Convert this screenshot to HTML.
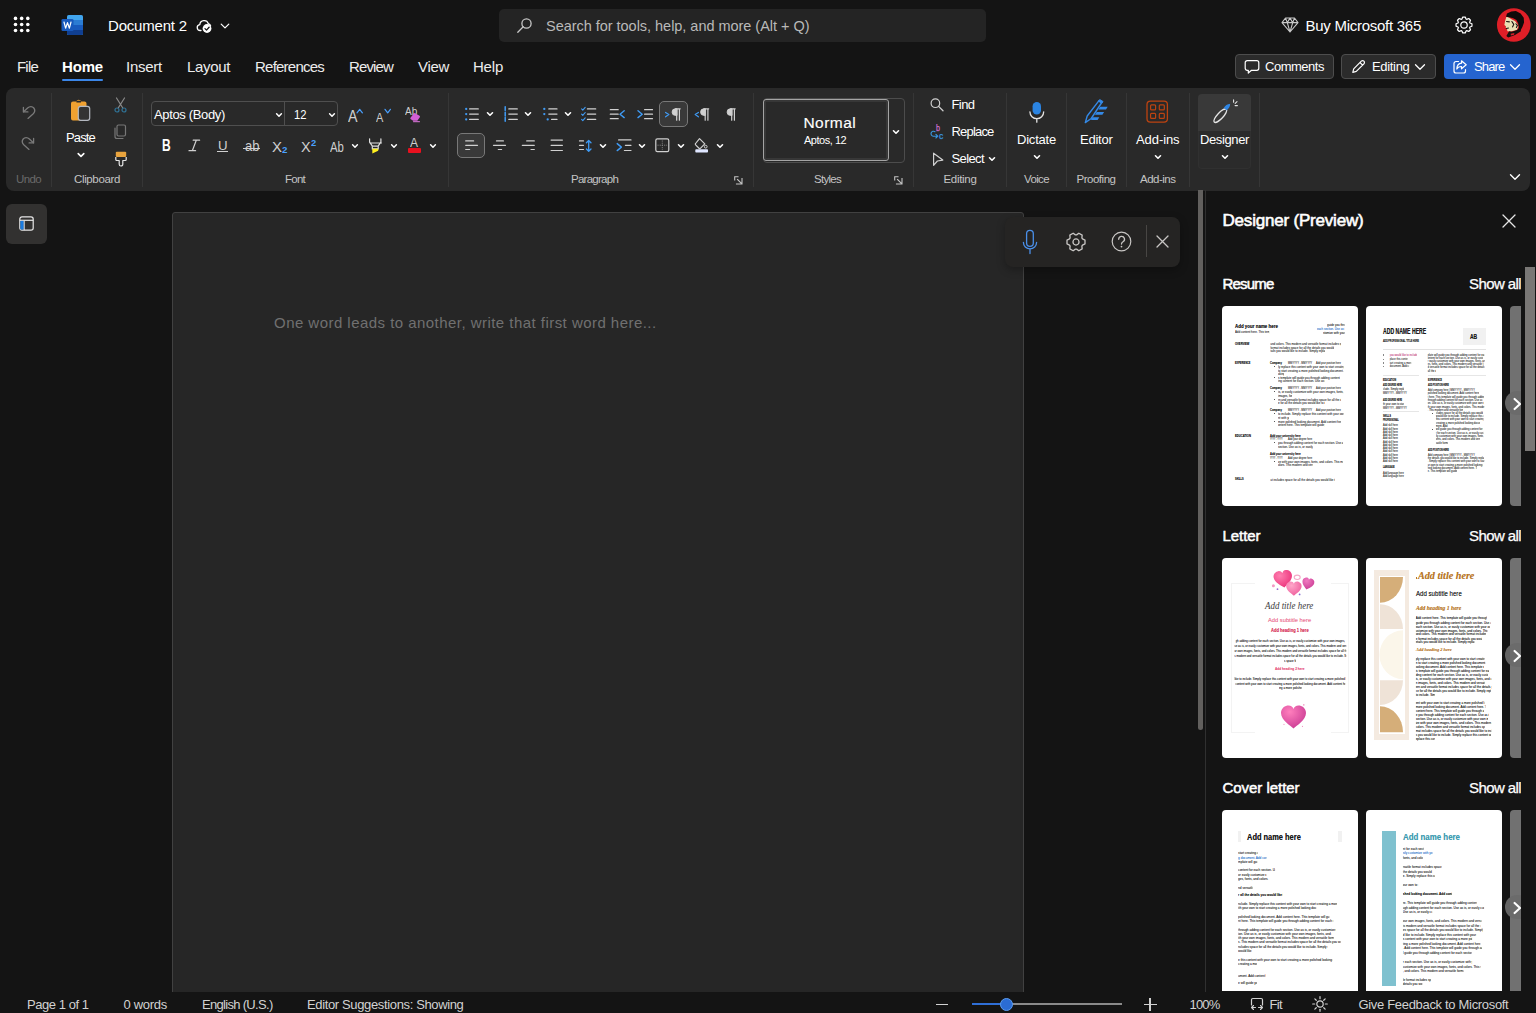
<!DOCTYPE html>
<html><head><meta charset="utf-8"><title>Document 2.docx</title>
<style>
html,body{margin:0;padding:0;background:#141414;}
body{width:1536px;height:1013px;overflow:hidden;position:relative;font-family:"Liberation Sans",sans-serif;}
.t{position:absolute;white-space:nowrap;line-height:1;}
.b{position:absolute;box-sizing:border-box;}
svg{overflow:visible}
</style></head><body>
<svg class="b" style="left:13px;top:16px;" width="18" height="18" viewBox="0 0 18 18" fill="none"><circle cx="2.50" cy="2.40" r="1.800" fill="#fff"/><circle cx="2.50" cy="8.45" r="1.800" fill="#fff"/><circle cx="2.50" cy="14.50" r="1.800" fill="#fff"/><circle cx="8.65" cy="2.40" r="1.800" fill="#fff"/><circle cx="8.65" cy="8.45" r="1.800" fill="#fff"/><circle cx="8.65" cy="14.50" r="1.800" fill="#fff"/><circle cx="14.80" cy="2.40" r="1.800" fill="#fff"/><circle cx="14.80" cy="8.45" r="1.800" fill="#fff"/><circle cx="14.80" cy="14.50" r="1.800" fill="#fff"/></svg>
<svg class="b" style="left:61px;top:14px;" width="23" height="22" viewBox="0 0 23 22" fill="none">
<rect x="6" y="1" width="16" height="20" rx="1.6" fill="#41a5ee"/>
<rect x="6" y="6" width="16" height="5" fill="#2b7cd3"/>
<rect x="6" y="11" width="16" height="5" fill="#185abd"/>
<path d="M6 16h16v3.4a1.6 1.6 0 0 1-1.6 1.6H7.6A1.6 1.6 0 0 1 6 19.4z" fill="#103f91"/>
<rect x="0.5" y="5" width="12" height="12" rx="1.3" fill="#185abd"/>
<path d="M3 8l1.6 6.2L6.5 8.6 8.4 14.2 10 8" stroke="#fff" stroke-width="1.2" stroke-linejoin="round" stroke-linecap="round"/>
</svg>
<div class="t" style="left:108.0px;top:18.3px;font-size:15px;color:#ffffff;font-weight:normal;font-style:normal;letter-spacing:-0.19px;font-family:'Liberation Sans',sans-serif;">Document 2</div>
<svg class="b" style="left:196px;top:18px;" width="17" height="16" viewBox="0 0 17 16" fill="none">
<path d="M5 12.5H4.2a3 3 0 0 1-.4-5.97A4.4 4.4 0 0 1 12.3 5.6 3.2 3.2 0 0 1 14.6 8" stroke="#fff" stroke-width="1.3" stroke-linecap="round"/>
<circle cx="11" cy="10.5" r="4.4" fill="#fff"/>
<path d="M9 10.6l1.5 1.5 2.6-2.9" stroke="#141414" stroke-width="1.3" stroke-linecap="round" stroke-linejoin="round"/>
</svg>
<svg class="b" style="left:218.7px;top:19.7px;" width="12" height="12" viewBox="0 0 12 12" fill="none"><path d="M2.2 4.1 L6 7.9 L9.8 4.1" stroke="#ffffff" stroke-width="1.25" stroke-linecap="round" stroke-linejoin="round"/></svg>
<div class="b" style="left:499px;top:8.5px;width:487px;height:33px;background:#242424;border-radius:5px;"></div>
<svg class="b" style="left:516px;top:17px;" width="17" height="17" viewBox="0 0 17 17" fill="none"><circle cx="10.5" cy="6.5" r="4.6" stroke="#c8c8c8" stroke-width="1.3"/><path d="M7.2 9.8L1.8 15.2" stroke="#c8c8c8" stroke-width="1.3" stroke-linecap="round"/></svg>
<div class="t" style="left:546.0px;top:18.7px;font-size:14.5px;color:#b9b9b9;font-weight:normal;font-style:normal;letter-spacing:-0.03px;font-family:'Liberation Sans',sans-serif;">Search for tools, help, and more (Alt + Q)</div>
<svg class="b" style="left:1281px;top:17px;" width="18" height="16" viewBox="0 0 18 16" fill="none"><path d="M4.5 1h9L17 5.6 9 15 1 5.6z M1 5.6h16 M6.3 5.6L9 15l2.7-9.4 M4.5 1l1.8 4.6L9 1l2.7 4.6L13.5 1" stroke="#c8c8c8" stroke-width="1.1" stroke-linejoin="round"/></svg>
<div class="t" style="left:1305.5px;top:18.3px;font-size:15px;color:#ffffff;font-weight:normal;font-style:normal;letter-spacing:-0.27px;font-family:'Liberation Sans',sans-serif;">Buy Microsoft 365</div>
<svg class="b" style="left:1453.8px;top:14.8px;" width="20" height="20" viewBox="0 0 20 20" fill="none"><path d="M15.94 7.97 L17.95 8.74 L17.95 11.26 L15.94 12.03 L15.64 12.76 L16.51 14.73 L14.73 16.51 L12.76 15.64 L12.03 15.94 L11.26 17.95 L8.74 17.95 L7.97 15.94 L7.24 15.64 L5.27 16.51 L3.49 14.73 L4.36 12.76 L4.06 12.03 L2.05 11.26 L2.05 8.74 L4.06 7.97 L4.36 7.24 L3.49 5.27 L5.27 3.49 L7.24 4.36 L7.97 4.06 L8.74 2.05 L11.26 2.05 L12.03 4.06 L12.76 4.36 L14.73 3.49 L16.51 5.27 L15.64 7.24Z" stroke="#fff" stroke-width="1.2" stroke-linejoin="round"/><circle cx="10" cy="10" r="3.22" stroke="#fff" stroke-width="1.2"/></svg>
<svg class="b" style="left:1496px;top:7px;" width="36" height="36" viewBox="0 0 36 36" fill="none">
<circle cx="17.750" cy="18" r="16.800" fill="#df1f27"/>
<path d="M10.38 9.75 9.12 13.94 8.38 17.88 9.94 19.25 9.75 20.81 11.19 22.38 11.38 24.25 14.62 24.56 20.75 22.88 22.25 19.56 21.19 16.75 19.00 13.94 15.88 12.38 12.75 10.62 z" fill="#e9e0b4"/>
<path d="M10.00 9.75 11.00 6.44 15.25 4.56 19.94 4.12 24.62 6.44 27.75 10.81 28.06 15.50 26.38 19.88 24.62 23.31 22.00 24.12 22.88 19.88 22.12 16.25 20.38 13.12 17.12 11.25 13.06 10.25 z" fill="#0e0b0a"/>
<path d="M13.06 24.25 10.38 28.94 12.25 30.62 19.00 28.00 24.94 24.25 24.31 20.50 21.00 23.12 15.88 24.75 z" fill="#15100e"/>
<path d="M10.56 14.56 13.38 14.88M 15.88 14.56 17.75 17.38 16.50 19.88M 10.25 21.44 12.44 21.00M 19.94 16.75 21.38 18.62 20.38 20.50" stroke="#1a1412" stroke-width="1.1" fill="none" stroke-linecap="round"/>
<path d="M14.62 26.75 18.38 26.00 18.06 27.69 14.94 28.62 z" fill="#d8202a"/>
</svg>
<div class="t" style="left:17.0px;top:58.9px;font-size:15px;color:#ececec;font-weight:normal;font-style:normal;letter-spacing:-0.79px;font-family:'Liberation Sans',sans-serif;">File</div>
<div class="t" style="left:62.0px;top:58.9px;font-size:15px;color:#ffffff;font-weight:bold;font-style:normal;letter-spacing:-0.17px;font-family:'Liberation Sans',sans-serif;">Home</div>
<div class="t" style="left:126.0px;top:58.9px;font-size:15px;color:#ececec;font-weight:normal;font-style:normal;letter-spacing:-0.25px;font-family:'Liberation Sans',sans-serif;">Insert</div>
<div class="t" style="left:187.0px;top:58.9px;font-size:15px;color:#ececec;font-weight:normal;font-style:normal;letter-spacing:-0.34px;font-family:'Liberation Sans',sans-serif;">Layout</div>
<div class="t" style="left:255.0px;top:58.9px;font-size:15px;color:#ececec;font-weight:normal;font-style:normal;letter-spacing:-0.77px;font-family:'Liberation Sans',sans-serif;">References</div>
<div class="t" style="left:349.0px;top:58.9px;font-size:15px;color:#ececec;font-weight:normal;font-style:normal;letter-spacing:-0.86px;font-family:'Liberation Sans',sans-serif;">Review</div>
<div class="t" style="left:418.0px;top:58.9px;font-size:15px;color:#ececec;font-weight:normal;font-style:normal;letter-spacing:-0.31px;font-family:'Liberation Sans',sans-serif;">View</div>
<div class="t" style="left:473.0px;top:58.9px;font-size:15px;color:#ececec;font-weight:normal;font-style:normal;letter-spacing:-0.21px;font-family:'Liberation Sans',sans-serif;">Help</div>
<div class="b" style="left:62px;top:78.5px;width:41px;height:2.5px;background:#3b86e8;border-radius:1.2px;"></div>
<div class="b" style="left:1235px;top:54px;width:99px;height:25px;background:#2b2b2b;border-radius:4px;border:1px solid #4d4d4d;"></div>
<svg class="b" style="left:1244px;top:59px;" width="16" height="16" viewBox="0 0 16 16" fill="none"><path d="M3.2 1.700h9.600a2 2 0 0 1 2 2v5.600a2 2 0 0 1-2 2H7.500L4.300 14v-2.700H3.200a2 2 0 0 1-2-2V3.700a2 2 0 0 1 2-2z" stroke="#fff" stroke-width="1.2" stroke-linejoin="round"/></svg>
<div class="t" style="left:1265.0px;top:59.8px;font-size:13px;color:#ffffff;font-weight:normal;font-style:normal;letter-spacing:-0.48px;font-family:'Liberation Sans',sans-serif;">Comments</div>
<div class="b" style="left:1341px;top:54px;width:95px;height:25px;background:#2b2b2b;border-radius:4px;border:1px solid #4d4d4d;"></div>
<svg class="b" style="left:1351px;top:59px;" width="15" height="15" viewBox="0 0 15 15" fill="none"><path d="M10.300 2.200a1.800 1.800 0 0 1 2.600 2.600L5.300 12.400 1.800 13.300l.9-3.500z M9 3.500l2.600 2.600" stroke="#fff" stroke-width="1.2" stroke-linejoin="round"/></svg>
<div class="t" style="left:1372.0px;top:59.8px;font-size:13px;color:#ffffff;font-weight:normal;font-style:normal;letter-spacing:-0.32px;font-family:'Liberation Sans',sans-serif;">Editing</div>
<svg class="b" style="left:1413.5px;top:61px;" width="12" height="12" viewBox="0 0 12 12" fill="none"><path d="M1.5 3.75 L6 8.25 L10.5 3.75" stroke="#ffffff" stroke-width="1.3" stroke-linecap="round" stroke-linejoin="round"/></svg>
<div class="b" style="left:1444px;top:54px;width:86.5px;height:25px;background:#2564cf;border-radius:4px;"></div>
<svg class="b" style="left:1452px;top:59px;" width="16" height="16" viewBox="0 0 16 16" fill="none"><path d="M6.500 2.500H4a2 2 0 0 0-2 2V12a2 2 0 0 0 2 2h7.500a2 2 0 0 0 2-2v-1.500" stroke="#fff" stroke-width="1.2" stroke-linecap="round"/><path d="M9.500 1.800l4.700 4-4.700 4V7.500C7 7.500 5.600 8.400 4.800 10 5 6.500 6.800 4.500 9.500 4.200z" stroke="#fff" stroke-width="1.2" stroke-linejoin="round"/></svg>
<div class="t" style="left:1474.0px;top:59.8px;font-size:13px;color:#ffffff;font-weight:normal;font-style:normal;letter-spacing:-0.84px;font-family:'Liberation Sans',sans-serif;">Share</div>
<svg class="b" style="left:1509px;top:61px;" width="12" height="12" viewBox="0 0 12 12" fill="none"><path d="M1.5 3.75 L6 8.25 L10.5 3.75" stroke="#ffffff" stroke-width="1.3" stroke-linecap="round" stroke-linejoin="round"/></svg>
<div class="b" style="left:6px;top:88px;width:1524px;height:102.7px;background:#292929;border-radius:8px;"></div>
<div class="b" style="left:51px;top:93px;width:1px;height:94px;background:#363636;border-radius:0px;"></div>
<div class="b" style="left:142px;top:93px;width:1px;height:94px;background:#363636;border-radius:0px;"></div>
<div class="b" style="left:448px;top:93px;width:1px;height:94px;background:#363636;border-radius:0px;"></div>
<div class="b" style="left:753px;top:93px;width:1px;height:94px;background:#363636;border-radius:0px;"></div>
<div class="b" style="left:913px;top:93px;width:1px;height:94px;background:#363636;border-radius:0px;"></div>
<div class="b" style="left:1006px;top:93px;width:1px;height:94px;background:#363636;border-radius:0px;"></div>
<div class="b" style="left:1066px;top:93px;width:1px;height:94px;background:#363636;border-radius:0px;"></div>
<div class="b" style="left:1126px;top:93px;width:1px;height:94px;background:#363636;border-radius:0px;"></div>
<div class="b" style="left:1189px;top:93px;width:1px;height:94px;background:#363636;border-radius:0px;"></div>
<div class="b" style="left:1259px;top:93px;width:1px;height:94px;background:#363636;border-radius:0px;"></div>
<div class="t" style="left:16.0px;top:173.7px;font-size:11.5px;color:#6a6a6a;font-weight:normal;font-style:normal;letter-spacing:-0.62px;font-family:'Liberation Sans',sans-serif;">Undo</div>
<div class="t" style="left:74.0px;top:173.7px;font-size:11.5px;color:#c4c4c4;font-weight:normal;font-style:normal;letter-spacing:-0.36px;font-family:'Liberation Sans',sans-serif;">Clipboard</div>
<div class="t" style="left:285.0px;top:173.7px;font-size:11.5px;color:#c4c4c4;font-weight:normal;font-style:normal;letter-spacing:-0.75px;font-family:'Liberation Sans',sans-serif;">Font</div>
<div class="t" style="left:571.0px;top:173.7px;font-size:11.5px;color:#c4c4c4;font-weight:normal;font-style:normal;letter-spacing:-0.74px;font-family:'Liberation Sans',sans-serif;">Paragraph</div>
<div class="t" style="left:814.0px;top:173.7px;font-size:11.5px;color:#c4c4c4;font-weight:normal;font-style:normal;letter-spacing:-0.72px;font-family:'Liberation Sans',sans-serif;">Styles</div>
<div class="t" style="left:943.5px;top:173.7px;font-size:11.5px;color:#c4c4c4;font-weight:normal;font-style:normal;letter-spacing:-0.31px;font-family:'Liberation Sans',sans-serif;">Editing</div>
<div class="t" style="left:1024.0px;top:173.7px;font-size:11.5px;color:#c4c4c4;font-weight:normal;font-style:normal;letter-spacing:-0.63px;font-family:'Liberation Sans',sans-serif;">Voice</div>
<div class="t" style="left:1076.5px;top:173.7px;font-size:11.5px;color:#c4c4c4;font-weight:normal;font-style:normal;letter-spacing:-0.48px;font-family:'Liberation Sans',sans-serif;">Proofing</div>
<div class="t" style="left:1140.0px;top:173.7px;font-size:11.5px;color:#c4c4c4;font-weight:normal;font-style:normal;letter-spacing:-0.50px;font-family:'Liberation Sans',sans-serif;">Add-ins</div>
<svg class="b" style="left:22px;top:105px;" width="13" height="14" viewBox="0 0 13 14" fill="none"><path d="M1.400 2.400V6.900H5.900" stroke="#7a7a7a" stroke-width="1.300" stroke-linecap="round" stroke-linejoin="round"/><path d="M1.600 6.700L5.600 3C7.500 1.200 10.300 1.100 11.800 3c1.500 2 1 4.300-.8 6L6 13.400" stroke="#7a7a7a" stroke-width="1.300" stroke-linecap="round" stroke-linejoin="round"/></svg>
<svg class="b" style="left:22px;top:136px;" width="13" height="14" viewBox="0 0 13 14" fill="none"><path d="M11.600 2.400V6.900H7.100" stroke="#7a7a7a" stroke-width="1.300" stroke-linecap="round" stroke-linejoin="round"/><path d="M11.400 6.700L7.400 3C5.500 1.200 2.700 1.100 1.200 3c-1.500 2-1 4.300.8 6L7 13.400" stroke="#7a7a7a" stroke-width="1.300" stroke-linecap="round" stroke-linejoin="round"/></svg>
<svg class="b" style="left:70px;top:99px;" width="22" height="23" viewBox="0 0 22 23" fill="none">
<path d="M3 2.600h3.200a2.600 2.600 0 0 1 5 0h3.300a2 2 0 0 1 2 2V19.500a2 2 0 0 1-2 2H3a2 2 0 0 1-2-2V4.600a2 2 0 0 1 2-2z" fill="#f0a130"/>
<rect x="6.300" y="1.800" width="4.800" height="1.800" rx=".9" fill="#292929"/>
<rect x="8.300" y="7.300" width="11.400" height="14" rx="2.300" fill="#333333" stroke="#b4b8c0" stroke-width="1.200"/>
</svg>
<div class="t" style="left:66.0px;top:131.3px;font-size:13px;color:#ffffff;font-weight:normal;font-style:normal;letter-spacing:-0.85px;font-family:'Liberation Sans',sans-serif;">Paste</div>
<svg class="b" style="left:74.5px;top:149px;" width="12" height="12" viewBox="0 0 12 12" fill="none"><path d="M3.2 4.6 L6 7.4 L8.8 4.6" stroke="#ffffff" stroke-width="1.6" stroke-linecap="round" stroke-linejoin="round"/></svg>
<svg class="b" style="left:114px;top:97px;" width="13" height="16" viewBox="0 0 13 16" fill="none"><path d="M2.500 1l6.300 10 M10.500 1L4.200 11" stroke="#8a8a8a" stroke-width="1.200" stroke-linecap="round"/><circle cx="3" cy="13" r="2" stroke="#2f7296" stroke-width="1.200"/><circle cx="10" cy="13" r="2" stroke="#2f7296" stroke-width="1.200"/></svg>
<svg class="b" style="left:114px;top:124px;" width="12" height="16" viewBox="0 0 12 16" fill="none"><rect x="3" y="1" width="8.500" height="11" rx="1.500" stroke="#777" stroke-width="1.200"/><path d="M1 4v8.500a2 2 0 0 0 2 2h6" stroke="#777" stroke-width="1.200" stroke-linecap="round"/></svg>
<svg class="b" style="left:115px;top:151px;" width="12" height="16" viewBox="0 0 12 16" fill="none"><rect x=".8" y=".8" width="10.400" height="5.200" rx="1" fill="#e8a33d"/><path d="M.8 6v2.500a1 1 0 0 0 1 1h2.400v3.700a1.800 1.800 0 0 0 3.600 0V9.500h2.400a1 1 0 0 0 1-1V6" stroke="#e6e6e6" stroke-width="1.200" stroke-linejoin="round"/></svg>
<div class="b" style="left:151px;top:101px;width:187px;height:25px;background:#292929;border-radius:4px;border:1px solid #4f4f4f;"></div>
<div class="b" style="left:284px;top:102px;width:1px;height:23px;background:#4f4f4f;border-radius:0px;"></div>
<div class="t" style="left:154.0px;top:108.3px;font-size:13px;color:#ffffff;font-weight:normal;font-style:normal;letter-spacing:-0.35px;font-family:'Liberation Sans',sans-serif;">Aptos (Body)</div>
<svg class="b" style="left:272.5px;top:108.5px;" width="12" height="12" viewBox="0 0 12 12" fill="none"><path d="M3.6 4.8 L6 7.2 L8.4 4.8" stroke="#ffffff" stroke-width="1.5" stroke-linecap="round" stroke-linejoin="round"/></svg>
<div class="t" style="left:293.5px;top:108.3px;font-size:13px;color:#ffffff;font-weight:normal;font-style:normal;letter-spacing:0.00px;font-family:'Liberation Sans',sans-serif;transform:scaleX(0.864);transform-origin:0 0;">12</div>
<svg class="b" style="left:325.5px;top:108.5px;" width="12" height="12" viewBox="0 0 12 12" fill="none"><path d="M3.6 4.8 L6 7.2 L8.4 4.8" stroke="#ffffff" stroke-width="1.5" stroke-linecap="round" stroke-linejoin="round"/></svg>
<div class="t" style="left:347.5px;top:107.5px;font-size:16.5px;color:#d0d0d0;font-weight:normal;font-style:normal;letter-spacing:0.00px;font-family:'Liberation Sans',sans-serif;transform:scaleX(0.863);transform-origin:0 0;">A</div>
<svg class="b" style="left:355.5px;top:107.5px;" width="8" height="6" viewBox="0 0 8 6" fill="none"><path d="M1 4.800L3.700 1.300l2.700 3.500" stroke="#4aa0ff" stroke-width="1.200" stroke-linecap="round" stroke-linejoin="round"/></svg>
<div class="t" style="left:376.0px;top:110.5px;font-size:13px;color:#d0d0d0;font-weight:normal;font-style:normal;letter-spacing:0.00px;font-family:'Liberation Sans',sans-serif;transform:scaleX(0.842);transform-origin:0 0;">A</div>
<svg class="b" style="left:383.8px;top:107.5px;" width="8" height="6" viewBox="0 0 8 6" fill="none"><path d="M1 1.300L3.700 4.800l2.700-3.500" stroke="#4aa0ff" stroke-width="1.200" stroke-linecap="round" stroke-linejoin="round"/></svg>
<div class="t" style="left:404.7px;top:106.1px;font-size:11.5px;color:#d0d0d0;font-weight:normal;font-style:normal;letter-spacing:0.00px;font-family:'Liberation Sans',sans-serif;transform:scaleX(0.874);transform-origin:0 0;">Ab</div>
<svg class="b" style="left:409px;top:112px;" width="12" height="11" viewBox="0 0 12 11" fill="none"><path d="M6.200 1.200l4.300 2.600a1 1 0 0 1 .3 1.400L8.300 8.700H4.200L1.800 7.200a1 1 0 0 1-.3-1.400l3.300-4.300a1 1 0 0 1 1.400-.300z" fill="#d45fd4"/><path d="M4.500 9.700h6" stroke="#e07ae0" stroke-width="1" stroke-linecap="round"/></svg>
<div class="t" style="left:161.5px;top:137.7px;font-size:16px;color:#ffffff;font-weight:bold;font-style:normal;letter-spacing:0.00px;font-family:'Liberation Sans',sans-serif;transform:scaleX(0.753);transform-origin:0 0;">B</div>
<svg class="b" style="left:188px;top:139px;" width="13" height="13" viewBox="0 0 13 13" fill="none"><path d="M5.200 1.200h6.400 M1 11.700h6.600 M8.300 1.200L4.300 11.700" stroke="#d0d0d0" stroke-width="1.200" stroke-linecap="round"/></svg>
<div class="t" style="left:217.7px;top:138.5px;font-size:13.2px;color:#d0d0d0;font-weight:normal;font-style:normal;letter-spacing:0.00px;font-family:'Liberation Sans',sans-serif;transform:scaleX(1.007);transform-origin:0 0;">U</div>
<div class="b" style="left:217px;top:150.7px;width:11px;height:1.2px;background:#d0d0d0;border-radius:0px;"></div>
<div class="t" style="left:244.5px;top:138.1px;font-size:15.5px;color:#d0d0d0;font-weight:normal;font-style:normal;letter-spacing:0.00px;font-family:'Liberation Sans',sans-serif;transform:scaleX(0.841);transform-origin:0 0;">ab</div>
<div class="b" style="left:243.3px;top:147.6px;width:16.5px;height:1.2px;background:#d0d0d0;border-radius:0px;"></div>
<div class="t" style="left:272.0px;top:138.5px;font-size:15px;color:#d0d0d0;font-weight:normal;font-style:normal;letter-spacing:0.00px;font-family:'Liberation Sans',sans-serif;transform:scaleX(1.000);transform-origin:0 0;">X</div>
<div class="t" style="left:282.2px;top:145.3px;font-size:9.5px;color:#4aa0ff;font-weight:bold;font-style:normal;letter-spacing:0.00px;font-family:'Liberation Sans',sans-serif;transform:scaleX(1.022);transform-origin:0 0;">2</div>
<div class="t" style="left:300.8px;top:138.5px;font-size:15px;color:#d0d0d0;font-weight:normal;font-style:normal;letter-spacing:0.00px;font-family:'Liberation Sans',sans-serif;transform:scaleX(0.960);transform-origin:0 0;">X</div>
<div class="t" style="left:310.6px;top:137.6px;font-size:9.5px;color:#4aa0ff;font-weight:bold;font-style:normal;letter-spacing:0.00px;font-family:'Liberation Sans',sans-serif;transform:scaleX(0.984);transform-origin:0 0;">2</div>
<div class="t" style="left:329.7px;top:138.5px;font-size:15px;color:#d0d0d0;font-weight:normal;font-style:normal;letter-spacing:0.00px;font-family:'Liberation Sans',sans-serif;transform:scaleX(0.758);transform-origin:0 0;">Ab</div>
<svg class="b" style="left:349px;top:139.5px;" width="12" height="12" viewBox="0 0 12 12" fill="none"><path d="M3.6 4.8 L6 7.2 L8.4 4.8" stroke="#ffffff" stroke-width="1.5" stroke-linecap="round" stroke-linejoin="round"/></svg>
<svg class="b" style="left:368px;top:138px;" width="15" height="16" viewBox="0 0 15 16" fill="none"><path d="M1.600 .8v3.400l2.800 4h5.700l2.800-4V.8 M2 5h11.400" stroke="#e0e0e0" stroke-width="1.200" stroke-linejoin="round" stroke-linecap="round"/><path d="M4.300 8.300v2.500h5.900V8.300" stroke="#e0e0e0" stroke-width="1.200"/><path d="M4.300 10.800h5.900v2L4.300 15.600z" fill="#fff01f"/></svg>
<svg class="b" style="left:387.5px;top:139.5px;" width="12" height="12" viewBox="0 0 12 12" fill="none"><path d="M3.6 4.8 L6 7.2 L8.4 4.8" stroke="#ffffff" stroke-width="1.5" stroke-linecap="round" stroke-linejoin="round"/></svg>
<div class="t" style="left:410.0px;top:137.3px;font-size:12px;color:#d0d0d0;font-weight:normal;font-style:normal;letter-spacing:0.00px;font-family:'Liberation Sans',sans-serif;transform:scaleX(0.999);transform-origin:0 0;">A</div>
<div class="b" style="left:408px;top:148.3px;width:12.6px;height:4.3px;background:#e8111f;border-radius:1px;"></div>
<svg class="b" style="left:426.5px;top:139.5px;" width="12" height="12" viewBox="0 0 12 12" fill="none"><path d="M3.6 4.8 L6 7.2 L8.4 4.8" stroke="#ffffff" stroke-width="1.5" stroke-linecap="round" stroke-linejoin="round"/></svg>
<div class="b" style="left:659px;top:101px;width:29px;height:26px;background:#393939;border-radius:5px;border:1px solid #787878;"></div>
<div class="b" style="left:457px;top:132.5px;width:28px;height:25.5px;background:#393939;border-radius:5px;border:1px solid #787878;"></div>
<svg class="b" style="left:0px;top:0px;pointer-events:none;" width="1536" height="1013" viewBox="0 0 1536 1013" fill="none"><circle cx="466.2" cy="108.9" r="1.150" fill="#3f9bf5"/><path d="M469.6 108.9H478.3" stroke="#d0d0d0" stroke-width="1.2" stroke-linecap="round"/><circle cx="466.2" cy="114.1" r="1.150" fill="#3f9bf5"/><path d="M469.6 114.1H478.3" stroke="#d0d0d0" stroke-width="1.2" stroke-linecap="round"/><circle cx="466.2" cy="119.4" r="1.150" fill="#3f9bf5"/><path d="M469.6 119.4H478.3" stroke="#d0d0d0" stroke-width="1.2" stroke-linecap="round"/><path d="M508.8 108.9H517.3" stroke="#d0d0d0" stroke-width="1.2" stroke-linecap="round"/><path d="M508.8 114.1H517.3" stroke="#d0d0d0" stroke-width="1.2" stroke-linecap="round"/><path d="M508.8 119.4H517.3" stroke="#d0d0d0" stroke-width="1.2" stroke-linecap="round"/><path d="M505.200 106.800V110.400 M505.200 112.200V116 M505.200 117.600V121.300" stroke="#3f9bf5" stroke-width="1.5" stroke-linecap="round" stroke-linejoin="round" fill="none"/><circle cx="544.3" cy="108.9" r="1.150" fill="#3f9bf5"/><path d="M548.8 108.9H557" stroke="#d0d0d0" stroke-width="1.2" stroke-linecap="round"/><circle cx="544.3" cy="114.1" r="1.150" fill="#3f9bf5"/><path d="M548.8 114.1H557" stroke="#d0d0d0" stroke-width="1.2" stroke-linecap="round"/><circle cx="547.7" cy="119.4" r="1.150" fill="#3f9bf5"/><path d="M551.6 119.4H557" stroke="#d0d0d0" stroke-width="1.2" stroke-linecap="round"/><path d="M581.600 108.9l1.200 1.200 2.400-2.800" stroke="#3f9bf5" stroke-width="1.1" stroke-linecap="round" stroke-linejoin="round" fill="none"/><path d="M587.4 108.9H595.7" stroke="#d0d0d0" stroke-width="1.2" stroke-linecap="round"/><path d="M581.600 114.1l1.200 1.200 2.400-2.800" stroke="#3f9bf5" stroke-width="1.1" stroke-linecap="round" stroke-linejoin="round" fill="none"/><path d="M587.4 114.1H595.7" stroke="#d0d0d0" stroke-width="1.2" stroke-linecap="round"/><path d="M581.600 119.4l1.200 1.200 2.400-2.800" stroke="#3f9bf5" stroke-width="1.1" stroke-linecap="round" stroke-linejoin="round" fill="none"/><path d="M587.4 119.4H595.7" stroke="#d0d0d0" stroke-width="1.2" stroke-linecap="round"/><path d="M610.3 109.7H618.2" stroke="#d0d0d0" stroke-width="1.2" stroke-linecap="round"/><path d="M610.3 114.2H618.2" stroke="#d0d0d0" stroke-width="1.2" stroke-linecap="round"/><path d="M610.3 118.7H618.2" stroke="#d0d0d0" stroke-width="1.2" stroke-linecap="round"/><path d="M624.200 110.800L620 114.200l4.200 3.400" stroke="#3f9bf5" stroke-width="1.4" stroke-linecap="round" stroke-linejoin="round" fill="none"/><path d="M644.6 109.7H652.5" stroke="#d0d0d0" stroke-width="1.2" stroke-linecap="round"/><path d="M644.6 114.2H652.5" stroke="#d0d0d0" stroke-width="1.2" stroke-linecap="round"/><path d="M644.6 118.7H652.5" stroke="#d0d0d0" stroke-width="1.2" stroke-linecap="round"/><path d="M638 110.800l4.200 3.400-4.200 3.400" stroke="#3f9bf5" stroke-width="1.4" stroke-linecap="round" stroke-linejoin="round" fill="none"/><path d="M676.6999999999999 108.8H675.4a3.300 3.300 0 0 0 0 6.600H676.6999999999999z" stroke="#d0d0d0" stroke-width="0.9" stroke-linecap="round" stroke-linejoin="round" fill="#d0d0d0"/><path d="M675.4 108.8H680.1999999999999 M676.6999999999999 108.8V120.2 M679.4 108.8V120.2" stroke="#d0d0d0" stroke-width="1.2" stroke-linecap="round" stroke-linejoin="round" fill="none"/><path d="M665.600 112.400l3.200 2.200-3.200 2.200" stroke="#3f9bf5" stroke-width="1.2" stroke-linecap="round" stroke-linejoin="round" fill="none"/><path d="M705.1999999999999 108.8H703.9a3.300 3.300 0 0 0 0 6.600H705.1999999999999z" stroke="#d0d0d0" stroke-width="0.9" stroke-linecap="round" stroke-linejoin="round" fill="#d0d0d0"/><path d="M703.9 108.8H708.6999999999999 M705.1999999999999 108.8V120.2 M707.9 108.8V120.2" stroke="#d0d0d0" stroke-width="1.2" stroke-linecap="round" stroke-linejoin="round" fill="none"/><path d="M698.400 112.400l-3.200 2.200 3.200 2.200" stroke="#3f9bf5" stroke-width="1.2" stroke-linecap="round" stroke-linejoin="round" fill="none"/><path d="M731.6999999999999 108.8H730.4a3.300 3.300 0 0 0 0 6.600H731.6999999999999z" stroke="#d0d0d0" stroke-width="0.9" stroke-linecap="round" stroke-linejoin="round" fill="#d0d0d0"/><path d="M730.4 108.8H735.1999999999999 M731.6999999999999 108.8V120.2 M734.4 108.8V120.2" stroke="#d0d0d0" stroke-width="1.2" stroke-linecap="round" stroke-linejoin="round" fill="none"/><path d="M465.7 140.9H473.6" stroke="#d0d0d0" stroke-width="1.2" stroke-linecap="round"/><path d="M465.7 145.3H477.5" stroke="#d0d0d0" stroke-width="1.2" stroke-linecap="round"/><path d="M465.7 149.5H469.6" stroke="#d0d0d0" stroke-width="1.2" stroke-linecap="round"/><path d="M496.5 140.9H503.4" stroke="#d0d0d0" stroke-width="1.2" stroke-linecap="round"/><path d="M493.5 145.3H505.5" stroke="#d0d0d0" stroke-width="1.2" stroke-linecap="round"/><path d="M498.3 149.5H501.6" stroke="#d0d0d0" stroke-width="1.2" stroke-linecap="round"/><path d="M526.7 140.9H534.3" stroke="#d0d0d0" stroke-width="1.2" stroke-linecap="round"/><path d="M522.3 145.3H534.3" stroke="#d0d0d0" stroke-width="1.2" stroke-linecap="round"/><path d="M531 149.5H534.3" stroke="#d0d0d0" stroke-width="1.2" stroke-linecap="round"/><path d="M551.1 140.1H562.4" stroke="#d0d0d0" stroke-width="1.2" stroke-linecap="round"/><path d="M551.1 145.3H562.4" stroke="#d0d0d0" stroke-width="1.2" stroke-linecap="round"/><path d="M551.1 150.5H562.4" stroke="#d0d0d0" stroke-width="1.2" stroke-linecap="round"/><path d="M579.5 140.9H583.5" stroke="#d0d0d0" stroke-width="1.2" stroke-linecap="round"/><path d="M579.5 145.3H583.5" stroke="#d0d0d0" stroke-width="1.2" stroke-linecap="round"/><path d="M579.5 149.5H583.5" stroke="#d0d0d0" stroke-width="1.2" stroke-linecap="round"/><path d="M588.700 140.600V151.200 M586.400 142.800l2.300-2.300 2.300 2.300 M586.400 149l2.300 2.300 2.300-2.300" stroke="#3f9bf5" stroke-width="1.3" stroke-linecap="round" stroke-linejoin="round" fill="none"/><path d="M618.6 139.9H631" stroke="#d0d0d0" stroke-width="1.2" stroke-linecap="round"/><path d="M625.4 145.3H631" stroke="#d0d0d0" stroke-width="1.2" stroke-linecap="round"/><path d="M624.4 150.5H631" stroke="#d0d0d0" stroke-width="1.2" stroke-linecap="round"/><path d="M617.200 143.600l4.200 3.500-4.200 3.500" stroke="#3f9bf5" stroke-width="1.4" stroke-linecap="round" stroke-linejoin="round" fill="none"/><rect x="655.800" y="138.800" width="13" height="12.800" rx="1.600" stroke="#d0d0d0" stroke-width="1.200" fill="none"/><path d="M662.300 140.500v9.600 M657.500 145.200h9.600" stroke="#8a8a8a" stroke-width=".9" stroke-dasharray="1.1 1.1"/><path d="M699.500 138.600l5.300 5.300-4.400 4.400a1 1 0 0 1-1.400 0l-3.400-3.400a1 1 0 0 1 0-1.400z" stroke="#d0d0d0" stroke-width="1.2" stroke-linecap="round" stroke-linejoin="round" fill="none"/><circle cx="705.700" cy="146.700" r="1.400" stroke="#d0d0d0" stroke-width="1" fill="none"/><rect x="695.300" y="149.200" width="12.700" height="3.400" rx=".8" fill="#dfe6ff"/></svg>
<svg class="b" style="left:483.6px;top:108.2px;" width="12" height="12" viewBox="0 0 12 12" fill="none"><path d="M3.5 4.75 L6 7.25 L8.5 4.75" stroke="#ffffff" stroke-width="1.6" stroke-linecap="round" stroke-linejoin="round"/></svg>
<svg class="b" style="left:522.3px;top:108.2px;" width="12" height="12" viewBox="0 0 12 12" fill="none"><path d="M3.5 4.75 L6 7.25 L8.5 4.75" stroke="#ffffff" stroke-width="1.6" stroke-linecap="round" stroke-linejoin="round"/></svg>
<svg class="b" style="left:561.6px;top:108.2px;" width="12" height="12" viewBox="0 0 12 12" fill="none"><path d="M3.5 4.75 L6 7.25 L8.5 4.75" stroke="#ffffff" stroke-width="1.6" stroke-linecap="round" stroke-linejoin="round"/></svg>
<svg class="b" style="left:597.4px;top:139.6px;" width="12" height="12" viewBox="0 0 12 12" fill="none"><path d="M3.5 4.75 L6 7.25 L8.5 4.75" stroke="#ffffff" stroke-width="1.6" stroke-linecap="round" stroke-linejoin="round"/></svg>
<svg class="b" style="left:636px;top:139.6px;" width="12" height="12" viewBox="0 0 12 12" fill="none"><path d="M3.5 4.75 L6 7.25 L8.5 4.75" stroke="#ffffff" stroke-width="1.6" stroke-linecap="round" stroke-linejoin="round"/></svg>
<svg class="b" style="left:675.1px;top:139.6px;" width="12" height="12" viewBox="0 0 12 12" fill="none"><path d="M3.5 4.75 L6 7.25 L8.5 4.75" stroke="#ffffff" stroke-width="1.6" stroke-linecap="round" stroke-linejoin="round"/></svg>
<svg class="b" style="left:714.2px;top:139.6px;" width="12" height="12" viewBox="0 0 12 12" fill="none"><path d="M3.5 4.75 L6 7.25 L8.5 4.75" stroke="#ffffff" stroke-width="1.6" stroke-linecap="round" stroke-linejoin="round"/></svg>
<svg class="b" style="left:734px;top:176px;" width="9" height="9" viewBox="0 0 9 9" fill="none"><path d="M.7 4V.7H4 M8 2.500V8H2.500 M3.500 3.500L7.500 7.500" stroke="#c4c4c4" stroke-width="1.100" stroke-linecap="square"/></svg>
<svg class="b" style="left:894px;top:176px;" width="9" height="9" viewBox="0 0 9 9" fill="none"><path d="M.7 4V.7H4 M8 2.500V8H2.500 M3.500 3.500L7.500 7.500" stroke="#c4c4c4" stroke-width="1.100" stroke-linecap="square"/></svg>
<div class="b" style="left:762.5px;top:98px;width:142px;height:64.5px;background:transparent;border-radius:4px;border:1px solid #4c4c4c;"></div>
<div class="b" style="left:763px;top:98.5px;width:125.5px;height:62.5px;background:#292929;border-radius:3px;border:1.200px solid #a4a4a4;box-shadow:inset 0 0 0 2px #373737;"></div>
<svg class="b" style="left:890.1px;top:126px;" width="12" height="12" viewBox="0 0 12 12" fill="none"><path d="M3.5 4.75 L6 7.25 L8.5 4.75" stroke="#ffffff" stroke-width="1.6" stroke-linecap="round" stroke-linejoin="round"/></svg>
<div class="t" style="left:803.4px;top:115.4px;font-size:15.5px;color:#ffffff;font-weight:normal;font-style:normal;letter-spacing:0.48px;font-family:'Liberation Sans',sans-serif;-webkit-text-stroke:.15px #fff;">Normal</div>
<div class="t" style="left:804.0px;top:135.1px;font-size:11px;color:#ffffff;font-weight:normal;font-style:normal;letter-spacing:-0.47px;font-family:'Liberation Sans',sans-serif;">Aptos, 12</div>
<svg class="b" style="left:0px;top:0px;pointer-events:none;" width="1536" height="1013" viewBox="0 0 1536 1013" fill="none"><circle cx="935.400" cy="103.200" r="4.300" stroke="#d0d0d0" stroke-width="1.200" fill="none"/><path d="M938.600 106.400L943 110.800" stroke="#d0d0d0" stroke-width="1.300" stroke-linecap="round"/><path d="M935 131.700a2.500 2.500 0 1 0 -1.800 4.500H937.600 M935.900 134.400l1.900 1.800-1.900 1.800" stroke="#3a96e0" stroke-width="1.150" stroke-linecap="round" stroke-linejoin="round" fill="none"/><path d="M933.600 153.200V165.300L937.400 161l5.400-.9z" stroke="#d0d0d0" stroke-width="1.200" stroke-linejoin="round" fill="none"/></svg>
<div class="t" style="left:951.5px;top:97.8px;font-size:13px;color:#ffffff;font-weight:normal;font-style:normal;letter-spacing:-0.57px;font-family:'Liberation Sans',sans-serif;">Find</div>
<div class="t" style="left:936.1px;top:123.3px;font-size:9.8px;color:#d070d2;font-weight:normal;font-style:normal;letter-spacing:0.00px;font-family:'Liberation Sans',sans-serif;-webkit-text-stroke:.25px #d070d2;transform:scaleX(0.734);transform-origin:0 0;">b</div>
<div class="t" style="left:938.9px;top:131.1px;font-size:9.8px;color:#3a96e0;font-weight:normal;font-style:normal;letter-spacing:0.00px;font-family:'Liberation Sans',sans-serif;-webkit-text-stroke:.25px #3a96e0;transform:scaleX(0.878);transform-origin:0 0;">c</div>
<div class="t" style="left:951.5px;top:125.0px;font-size:13px;color:#ffffff;font-weight:normal;font-style:normal;letter-spacing:-0.81px;font-family:'Liberation Sans',sans-serif;">Replace</div>
<div class="t" style="left:951.5px;top:152.3px;font-size:13px;color:#ffffff;font-weight:normal;font-style:normal;letter-spacing:-0.60px;font-family:'Liberation Sans',sans-serif;">Select</div>
<svg class="b" style="left:986px;top:152.8px;" width="12" height="12" viewBox="0 0 12 12" fill="none"><path d="M3.5 4.75 L6 7.25 L8.5 4.75" stroke="#ffffff" stroke-width="1.6" stroke-linecap="round" stroke-linejoin="round"/></svg>
<div class="b" style="left:1198px;top:94px;width:53px;height:37px;background:#393939;border-radius:0px;border-radius:4px 4px 0 0;"></div>
<div class="b" style="left:1198px;top:131px;width:53px;height:38px;background:#2b2b2b;border-radius:0px;border:1px solid #303030;border-top:none;border-radius:0 0 4px 4px;"></div>
<svg class="b" style="left:0px;top:0px;pointer-events:none;" width="1536" height="1013" viewBox="0 0 1536 1013" fill="none"><rect x="1032.600" y="102" width="8.400" height="12.600" rx="4.200" fill="#2b84e2"/><path d="M1029.900 111.800a6.900 6.900 0 0 0 13.800 0 M1036.800 118.900V122.200" stroke="#e4e4e4" stroke-width="1.300" stroke-linecap="round" fill="none"/><path d="M1085.300 122.600l1.900-6.600 11.600-15.200 3 1.700-10.600 16z" stroke="#3489e6" stroke-width="1.400" stroke-linejoin="round" fill="none"/><path d="M1098.500 101.200l1.200-1.600 3.300 1.900-1.100 1.700z" fill="#3489e6" stroke="#3489e6" stroke-width="1" stroke-linejoin="round"/><path d="M1100.200 106.800h7.500l-1.700 2.700h-7.600z M1096.700 112h7.400l-1.700 2.700h-7.500z M1092.700 117.300h6.600l-1.700 2.700h-6.700z" fill="#3489e6"/><rect x="1147" y="101.100" width="20.400" height="21" rx="3.400" stroke="#bd4310" stroke-width="1.300" fill="none"/><rect x="1150.6" y="104.9" width="5" height="5" rx=".9" stroke="#bd4310" stroke-width="1.200" fill="none"/><rect x="1159.3" y="104.9" width="5" height="5" rx=".9" stroke="#bd4310" stroke-width="1.200" fill="none"/><rect x="1150.6" y="113.3" width="5" height="5" rx=".9" stroke="#bd4310" stroke-width="1.200" fill="none"/><rect x="1159.3" y="113.3" width="5" height="5" rx=".9" stroke="#bd4310" stroke-width="1.200" fill="none"/><g transform="translate(1220.300 115.700) rotate(-46.500)"><ellipse cx="0" cy="0" rx="8.800" ry="2.900" stroke="#e4e4e4" stroke-width="1.300" fill="none"/><path d="M7.600 -2.700c3.200-.9 5.800-.3 7.900 1.600 -2 2-4.700 2.600-7.900 1.700 1-1.100 1-2.200 0-3.300z" fill="#2f86e4"/></g><path d="M1233.600 99.900v2.400 M1237 101.700l-1.800 1.700 M1237.400 105.600h-2.300" stroke="#e4e4e4" stroke-width="1.100" stroke-linecap="round"/></svg>
<div class="t" style="left:1017.0px;top:133.3px;font-size:13px;color:#ffffff;font-weight:normal;font-style:normal;letter-spacing:-0.21px;font-family:'Liberation Sans',sans-serif;">Dictate</div>
<svg class="b" style="left:1031px;top:151px;" width="12" height="12" viewBox="0 0 12 12" fill="none"><path d="M3.5 4.75 L6 7.25 L8.5 4.75" stroke="#ffffff" stroke-width="1.6" stroke-linecap="round" stroke-linejoin="round"/></svg>
<div class="t" style="left:1080.0px;top:133.3px;font-size:13px;color:#ffffff;font-weight:normal;font-style:normal;letter-spacing:-0.24px;font-family:'Liberation Sans',sans-serif;">Editor</div>
<div class="t" style="left:1136.0px;top:133.3px;font-size:13px;color:#ffffff;font-weight:normal;font-style:normal;letter-spacing:-0.08px;font-family:'Liberation Sans',sans-serif;">Add-ins</div>
<svg class="b" style="left:1151.5px;top:151px;" width="12" height="12" viewBox="0 0 12 12" fill="none"><path d="M3.5 4.75 L6 7.25 L8.5 4.75" stroke="#ffffff" stroke-width="1.6" stroke-linecap="round" stroke-linejoin="round"/></svg>
<div class="t" style="left:1200.0px;top:133.3px;font-size:13px;color:#ffffff;font-weight:normal;font-style:normal;letter-spacing:-0.38px;font-family:'Liberation Sans',sans-serif;">Designer</div>
<svg class="b" style="left:1219px;top:151px;" width="12" height="12" viewBox="0 0 12 12" fill="none"><path d="M3.5 4.75 L6 7.25 L8.5 4.75" stroke="#ffffff" stroke-width="1.6" stroke-linecap="round" stroke-linejoin="round"/></svg>
<svg class="b" style="left:1509px;top:171px;" width="12" height="12" viewBox="0 0 12 12" fill="none"><path d="M1.5 3.75 L6 8.25 L10.5 3.75" stroke="#ffffff" stroke-width="1.4" stroke-linecap="round" stroke-linejoin="round"/></svg>
<div class="b" style="left:5.7px;top:204px;width:41px;height:39.6px;background:#323130;border-radius:6px;"></div>
<svg class="b" style="left:19px;top:216.2px;" width="15" height="15" viewBox="0 0 15 15" fill="none"><rect x=".8" y=".8" width="13.400" height="13.400" rx="2.200" stroke="#e6e6e6" stroke-width="1.200"/><path d="M.8 4.300h13.400" stroke="#e6e6e6" stroke-width="1.200"/><rect x="1.400" y="4.900" width="3.400" height="8.600" fill="#1a7be0"/><path d="M5.200 4.300v9.900" stroke="#e6e6e6" stroke-width="1"/></svg>
<div class="b" style="left:172px;top:212px;width:852px;height:790px;background:#262626;border-radius:3px;border:1px solid #414141;"></div>
<div class="t" style="left:274.0px;top:315.3px;font-size:15px;color:#707070;font-weight:normal;font-style:normal;letter-spacing:0.46px;font-family:'Liberation Sans',sans-serif;">One word leads to another, write that first word here...</div>
<div class="b" style="left:1005px;top:217px;width:175px;height:50px;background:#252423;border-radius:8px;box-shadow:0 3px 9px rgba(0,0,0,.28);"></div>
<svg class="b" style="left:0px;top:0px;pointer-events:none;" width="1536" height="1013" viewBox="0 0 1536 1013" fill="none"><rect x="1026.600" y="230.300" width="6.700" height="16" rx="3.350" stroke="#4a8fe8" stroke-width="1.300"/><path d="M1023.400 242.300a6.600 6.600 0 0 0 13.200 0 M1030 249.200v4.300" stroke="#4a8fe8" stroke-width="1.300" stroke-linecap="round"/></svg>
<svg class="b" style="left:1066px;top:231.5px;" width="20" height="20" viewBox="0 0 20 20" fill="none"><path d="M16.49 6.94 L19.00 8.09 L19.00 11.91 L16.49 13.06 L15.89 14.10 L16.16 16.84 L12.84 18.75 L10.60 17.15 L9.40 17.15 L7.16 18.75 L3.84 16.84 L4.11 14.10 L3.51 13.06 L1.00 11.91 L1.00 8.09 L3.51 6.94 L4.11 5.90 L3.84 3.16 L7.16 1.25 L9.40 2.85 L10.60 2.85 L12.84 1.25 L16.16 3.16 L15.89 5.90Z" stroke="#c8c6c4" stroke-width="1.3" stroke-linejoin="round"/><circle cx="10" cy="10" r="3.04" stroke="#c8c6c4" stroke-width="1.3"/></svg>
<svg class="b" style="left:1111px;top:231px;" width="21" height="21" viewBox="0 0 21 21" fill="none"><circle cx="10.500" cy="10.500" r="9.300" stroke="#c8c6c4" stroke-width="1.200"/><path d="M7.700 8.300a2.900 2.900 0 1 1 4.300 2.500c-1 .6-1.500 1.100-1.500 2.300" stroke="#c8c6c4" stroke-width="1.300" stroke-linecap="round"/><circle cx="10.500" cy="15.600" r=".9" fill="#c8c6c4"/></svg>
<div class="b" style="left:1146px;top:225px;width:1px;height:32px;background:#484644;border-radius:0px;"></div>
<svg class="b" style="left:1156px;top:235px;" width="13" height="13" viewBox="0 0 13 13" fill="none"><path d="M1 1l11 11 M12 1L1 12" stroke="#c8c6c4" stroke-width="1.300" stroke-linecap="round"/></svg>
<div class="b" style="left:1198px;top:190px;width:5px;height:540px;background:#62605e;border-radius:0px;border-radius:0 0 3px 3px;"></div>
<div class="b" style="left:1205px;top:190px;width:1px;height:802px;background:#303030;border-radius:0px;"></div>
<div class="t" style="left:1222.5px;top:212.0px;font-size:17px;color:#ffffff;font-weight:normal;font-style:normal;letter-spacing:-0.20px;font-family:'Liberation Sans',sans-serif;-webkit-text-stroke:.6px #fff;">Designer (Preview)</div>
<svg class="b" style="left:1502px;top:213.5px;" width="14" height="14" viewBox="0 0 14 14" fill="none"><path d="M1 1l12 12 M13 1L1 13" stroke="#e6e6e6" stroke-width="1.300" stroke-linecap="round"/></svg>
<div class="b" style="left:1525.2px;top:267px;width:9.6px;height:183.6px;background:#797775;border-radius:0px;"></div>
<div class="b" style="left:1206px;top:190px;width:315px;height:801px;overflow:hidden;">
<div class="t" style="left:16.5px;top:86.2px;font-size:15px;color:#ffffff;font-weight:normal;font-style:normal;letter-spacing:-0.81px;font-family:'Liberation Sans',sans-serif;-webkit-text-stroke:.5px #fff;">Resume</div>
<div class="t" style="left:263.0px;top:86.2px;font-size:15px;color:#ffffff;font-weight:normal;font-style:normal;letter-spacing:-0.59px;font-family:'Liberation Sans',sans-serif;-webkit-text-stroke:.25px #fff;">Show all</div>
<div class="b" style="left:303.5px;top:116px;width:20px;height:200px;background:#717171;border-radius:4px;"></div>
<div class="t" style="left:16.5px;top:338.2px;font-size:15px;color:#ffffff;font-weight:normal;font-style:normal;letter-spacing:-0.06px;font-family:'Liberation Sans',sans-serif;-webkit-text-stroke:.5px #fff;">Letter</div>
<div class="t" style="left:263.0px;top:338.2px;font-size:15px;color:#ffffff;font-weight:normal;font-style:normal;letter-spacing:-0.59px;font-family:'Liberation Sans',sans-serif;-webkit-text-stroke:.25px #fff;">Show all</div>
<div class="b" style="left:303.5px;top:368px;width:20px;height:200px;background:#717171;border-radius:4px;"></div>
<div class="t" style="left:16.5px;top:590.2px;font-size:15px;color:#ffffff;font-weight:normal;font-style:normal;letter-spacing:-0.04px;font-family:'Liberation Sans',sans-serif;-webkit-text-stroke:.5px #fff;">Cover letter</div>
<div class="t" style="left:263.0px;top:590.2px;font-size:15px;color:#ffffff;font-weight:normal;font-style:normal;letter-spacing:-0.59px;font-family:'Liberation Sans',sans-serif;-webkit-text-stroke:.25px #fff;">Show all</div>
<div class="b" style="left:303.5px;top:620px;width:20px;height:200px;background:#717171;border-radius:4px;"></div>
<div class="b" style="left:16px;top:116px;width:135.600px;height:200px;overflow:hidden;border-radius:4px;background:#fff;">
<div class="b" style="left:12.9px;top:17.1px;text-shadow:0 0 .3px #11111188;white-space:nowrap;font-size:5.4px;line-height:6.5px;color:#111111;font-weight:bold;font-style:normal;font-family:'Liberation Sans',sans-serif;transform:scaleX(0.824);transform-origin:0 0;">Add your name here</div>
<div class="b" style="left:12.9px;top:22.9px;width:34.3px;height:6.0px;clip-path:inset(-1px 0 -1px 0);white-space:nowrap;text-shadow:0 0 .6px #2e2e2e88;font-size:2.9000000000000004px;line-height:6.0px;color:#2e2e2e;font-weight:normal;font-style:normal;font-family:'Liberation Sans',sans-serif;text-align:left;opacity:1">Add content here. This template will guid</div>
<div class="b" style="left:105.1px;top:16.1px;width:17.5px;height:6.0px;clip-path:inset(-1px 0 -1px 0);white-space:nowrap;text-shadow:0 0 .6px #22222288;font-size:2.9000000000000004px;line-height:6.0px;color:#222222;font-weight:normal;font-style:normal;font-family:'Liberation Sans',sans-serif;text-align:right;opacity:1">guide you through addin</div>
<div class="b" style="left:94.9px;top:19.8px;width:27.7px;height:6.0px;clip-path:inset(-1px 0 -1px 0);white-space:nowrap;text-shadow:0 0 .6px #2a6fc988;font-size:2.9000000000000004px;line-height:6.0px;color:#2a6fc9;font-weight:normal;font-style:normal;font-family:'Liberation Sans',sans-serif;text-align:right;opacity:1">each section. Use as is, or easil</div>
<div class="b" style="left:101.0px;top:23.7px;width:21.6px;height:6.0px;clip-path:inset(-1px 0 -1px 0);white-space:nowrap;text-shadow:0 0 .6px #22222288;font-size:2.9000000000000004px;line-height:6.0px;color:#222222;font-weight:normal;font-style:normal;font-family:'Liberation Sans',sans-serif;text-align:right;opacity:1">stomize with your own image</div>
<div class="b" style="left:12.9px;top:36.8px;text-shadow:0 0 .6px #11111188;white-space:nowrap;font-size:2.9000000000000004px;line-height:3.5px;color:#111111;font-weight:bold;font-style:normal;font-family:'Liberation Sans',sans-serif;transform:scaleX(0.924);transform-origin:0 0;">OVERVIEW</div>
<div class="b" style="left:48.3px;top:34.8px;width:70.7px;height:6.0px;clip-path:inset(-1px 0 -1px 0);white-space:nowrap;text-shadow:0 0 .6px #2e2e2e88;font-size:2.9000000000000004px;line-height:6.0px;color:#2e2e2e;font-weight:normal;font-style:normal;font-family:'Liberation Sans',sans-serif;text-align:left;opacity:1">and colors. This modern and versatile format includes space for all</div>
<div class="b" style="left:48.3px;top:38.5px;width:63.7px;height:6.0px;clip-path:inset(-1px 0 -1px 0);white-space:nowrap;text-shadow:0 0 .6px #2e2e2e88;font-size:2.9000000000000004px;line-height:6.0px;color:#2e2e2e;font-weight:normal;font-style:normal;font-family:'Liberation Sans',sans-serif;text-align:left;opacity:1">format includes space for all the details you would like to i</div>
<div class="b" style="left:48.3px;top:42.2px;width:54.7px;height:6.0px;clip-path:inset(-1px 0 -1px 0);white-space:nowrap;text-shadow:0 0 .6px #2e2e2e88;font-size:2.9000000000000004px;line-height:6.0px;color:#2e2e2e;font-weight:normal;font-style:normal;font-family:'Liberation Sans',sans-serif;text-align:left;opacity:1">tails you would like to include. Simply replace this c</div>
<div class="b" style="left:12.9px;top:55.9px;text-shadow:0 0 .6px #11111188;white-space:nowrap;font-size:2.9000000000000004px;line-height:3.5px;color:#111111;font-weight:bold;font-style:normal;font-family:'Liberation Sans',sans-serif;transform:scaleX(0.829);transform-origin:0 0;">EXPERIENCE</div>
<div class="b" style="left:48.3px;top:55.9px;text-shadow:0 0 .6px #11111188;white-space:nowrap;font-size:2.9000000000000004px;line-height:3.5px;color:#111111;font-weight:bold;font-style:normal;font-family:'Liberation Sans',sans-serif;transform:scaleX(0.901);transform-origin:0 0;">Company</div>
<div class="b" style="left:65.7px;top:55.9px;text-shadow:0 0 .6px #2e2e2e88;white-space:nowrap;font-size:2.9000000000000004px;line-height:3.5px;color:#2e2e2e;font-weight:normal;font-style:normal;font-family:'Liberation Sans',sans-serif;transform:scaleX(0.830);transform-origin:0 0;">MM/YYYY - MM/YYYY</div>
<div class="b" style="left:93.8px;top:55.9px;text-shadow:0 0 .6px #2e2e2e88;white-space:nowrap;font-size:2.9000000000000004px;line-height:3.5px;color:#2e2e2e;font-weight:normal;font-style:normal;font-family:'Liberation Sans',sans-serif;transform:scaleX(0.858);transform-origin:0 0;">Add your position here</div>
<div class="b" style="left:56.0px;top:57.8px;width:65.5px;height:6.0px;clip-path:inset(-1px 0 -1px 0);white-space:nowrap;text-shadow:0 0 .6px #2e2e2e88;font-size:2.9000000000000004px;line-height:6.0px;color:#2e2e2e;font-weight:normal;font-style:normal;font-family:'Liberation Sans',sans-serif;text-align:left;opacity:1">ly replace this content with your own to start creating a more</div>
<div class="b" style="left:56.0px;top:61.5px;width:65.6px;height:6.0px;clip-path:inset(-1px 0 -1px 0);white-space:nowrap;text-shadow:0 0 .6px #2e2e2e88;font-size:2.9000000000000004px;line-height:6.0px;color:#2e2e2e;font-weight:normal;font-style:normal;font-family:'Liberation Sans',sans-serif;text-align:left;opacity:1">to start creating a more polished looking document. Add conten</div>
<div class="b" style="left:56.0px;top:65.2px;width:6.0px;height:6.0px;clip-path:inset(-1px 0 -1px 0);white-space:nowrap;text-shadow:0 0 .6px #2e2e2e88;font-size:2.9000000000000004px;line-height:6.0px;color:#2e2e2e;font-weight:normal;font-style:normal;font-family:'Liberation Sans',sans-serif;text-align:left;opacity:1">oking docum</div>
<div class="b" style="left:56.0px;top:68.6px;width:62.0px;height:6.0px;clip-path:inset(-1px 0 -1px 0);white-space:nowrap;text-shadow:0 0 .6px #2e2e2e88;font-size:2.9000000000000004px;line-height:6.0px;color:#2e2e2e;font-weight:normal;font-style:normal;font-family:'Liberation Sans',sans-serif;text-align:left;opacity:1">s template will guide you through adding content for each se</div>
<div class="b" style="left:56.0px;top:72.3px;width:47.0px;height:6.0px;clip-path:inset(-1px 0 -1px 0);white-space:nowrap;text-shadow:0 0 .6px #2e2e2e88;font-size:2.9000000000000004px;line-height:6.0px;color:#2e2e2e;font-weight:normal;font-style:normal;font-family:'Liberation Sans',sans-serif;text-align:left;opacity:1">ing content for each section. Use as is, or eas</div>
<div class="b" style="left:52.0px;top:59.7px;width:1.0px;height:1.0px;background:#222;border-radius:0.5px;"></div>
<div class="b" style="left:52.0px;top:70.5px;width:1.0px;height:1.0px;background:#222;border-radius:0.5px;"></div>
<div class="b" style="left:48.3px;top:81.3px;text-shadow:0 0 .6px #11111188;white-space:nowrap;font-size:2.9000000000000004px;line-height:3.5px;color:#111111;font-weight:bold;font-style:normal;font-family:'Liberation Sans',sans-serif;transform:scaleX(0.901);transform-origin:0 0;">Company</div>
<div class="b" style="left:65.7px;top:81.3px;text-shadow:0 0 .6px #2e2e2e88;white-space:nowrap;font-size:2.9000000000000004px;line-height:3.5px;color:#2e2e2e;font-weight:normal;font-style:normal;font-family:'Liberation Sans',sans-serif;transform:scaleX(0.830);transform-origin:0 0;">MM/YYYY - MM/YYYY</div>
<div class="b" style="left:93.8px;top:81.3px;text-shadow:0 0 .6px #2e2e2e88;white-space:nowrap;font-size:2.9000000000000004px;line-height:3.5px;color:#2e2e2e;font-weight:normal;font-style:normal;font-family:'Liberation Sans',sans-serif;transform:scaleX(0.858);transform-origin:0 0;">Add your position here</div>
<div class="b" style="left:56.0px;top:83.4px;width:65.5px;height:6.0px;clip-path:inset(-1px 0 -1px 0);white-space:nowrap;text-shadow:0 0 .6px #2e2e2e88;font-size:2.9000000000000004px;line-height:6.0px;color:#2e2e2e;font-weight:normal;font-style:normal;font-family:'Liberation Sans',sans-serif;text-align:left;opacity:1">is, or easily customize with your own images, fonts, and colors</div>
<div class="b" style="left:56.0px;top:87.1px;width:14.0px;height:6.0px;clip-path:inset(-1px 0 -1px 0);white-space:nowrap;text-shadow:0 0 .6px #2e2e2e88;font-size:2.9000000000000004px;line-height:6.0px;color:#2e2e2e;font-weight:normal;font-style:normal;font-family:'Liberation Sans',sans-serif;text-align:left;opacity:1">images, fonts, an</div>
<div class="b" style="left:56.0px;top:90.6px;width:63.0px;height:6.0px;clip-path:inset(-1px 0 -1px 0);white-space:nowrap;text-shadow:0 0 .6px #2e2e2e88;font-size:2.9000000000000004px;line-height:6.0px;color:#2e2e2e;font-weight:normal;font-style:normal;font-family:'Liberation Sans',sans-serif;text-align:left;opacity:1">rn and versatile format includes space for all the details yo</div>
<div class="b" style="left:56.0px;top:94.3px;width:47.0px;height:6.0px;clip-path:inset(-1px 0 -1px 0);white-space:nowrap;text-shadow:0 0 .6px #2e2e2e88;font-size:2.9000000000000004px;line-height:6.0px;color:#2e2e2e;font-weight:normal;font-style:normal;font-family:'Liberation Sans',sans-serif;text-align:left;opacity:1">e for all the details you would like to include</div>
<div class="b" style="left:52.0px;top:85.3px;width:1.0px;height:1.0px;background:#222;border-radius:0.5px;"></div>
<div class="b" style="left:52.0px;top:92.5px;width:1.0px;height:1.0px;background:#222;border-radius:0.5px;"></div>
<div class="b" style="left:48.3px;top:103.1px;text-shadow:0 0 .6px #11111188;white-space:nowrap;font-size:2.9000000000000004px;line-height:3.5px;color:#111111;font-weight:bold;font-style:normal;font-family:'Liberation Sans',sans-serif;transform:scaleX(0.901);transform-origin:0 0;">Company</div>
<div class="b" style="left:65.7px;top:103.1px;text-shadow:0 0 .6px #2e2e2e88;white-space:nowrap;font-size:2.9000000000000004px;line-height:3.5px;color:#2e2e2e;font-weight:normal;font-style:normal;font-family:'Liberation Sans',sans-serif;transform:scaleX(0.830);transform-origin:0 0;">MM/YYYY - MM/YYYY</div>
<div class="b" style="left:93.8px;top:103.1px;text-shadow:0 0 .6px #2e2e2e88;white-space:nowrap;font-size:2.9000000000000004px;line-height:3.5px;color:#2e2e2e;font-weight:normal;font-style:normal;font-family:'Liberation Sans',sans-serif;transform:scaleX(0.858);transform-origin:0 0;">Add your position here</div>
<div class="b" style="left:56.0px;top:105.4px;width:65.6px;height:6.0px;clip-path:inset(-1px 0 -1px 0);white-space:nowrap;text-shadow:0 0 .6px #2e2e2e88;font-size:2.9000000000000004px;line-height:6.0px;color:#2e2e2e;font-weight:normal;font-style:normal;font-family:'Liberation Sans',sans-serif;text-align:left;opacity:1">to include. Simply replace this content with your own to start</div>
<div class="b" style="left:56.0px;top:108.9px;width:11.0px;height:6.0px;clip-path:inset(-1px 0 -1px 0);white-space:nowrap;text-shadow:0 0 .6px #2e2e2e88;font-size:2.9000000000000004px;line-height:6.0px;color:#2e2e2e;font-weight:normal;font-style:normal;font-family:'Liberation Sans',sans-serif;text-align:left;opacity:1">nt with your ow</div>
<div class="b" style="left:56.0px;top:112.6px;width:63.0px;height:6.0px;clip-path:inset(-1px 0 -1px 0);white-space:nowrap;text-shadow:0 0 .6px #2e2e2e88;font-size:2.9000000000000004px;line-height:6.0px;color:#2e2e2e;font-weight:normal;font-style:normal;font-family:'Liberation Sans',sans-serif;text-align:left;opacity:1">more polished looking document. Add content here. This templa</div>
<div class="b" style="left:56.0px;top:116.3px;width:47.0px;height:6.0px;clip-path:inset(-1px 0 -1px 0);white-space:nowrap;text-shadow:0 0 .6px #2e2e2e88;font-size:2.9000000000000004px;line-height:6.0px;color:#2e2e2e;font-weight:normal;font-style:normal;font-family:'Liberation Sans',sans-serif;text-align:left;opacity:1">ontent here. This template will guide you throu</div>
<div class="b" style="left:52.0px;top:107.3px;width:1.0px;height:1.0px;background:#222;border-radius:0.5px;"></div>
<div class="b" style="left:52.0px;top:114.5px;width:1.0px;height:1.0px;background:#222;border-radius:0.5px;"></div>
<div class="b" style="left:12.9px;top:128.6px;text-shadow:0 0 .6px #11111188;white-space:nowrap;font-size:2.9000000000000004px;line-height:3.5px;color:#111111;font-weight:bold;font-style:normal;font-family:'Liberation Sans',sans-serif;transform:scaleX(0.934);transform-origin:0 0;">EDUCATION</div>
<div class="b" style="left:48.3px;top:128.6px;text-shadow:0 0 .6px #11111188;white-space:nowrap;font-size:2.9000000000000004px;line-height:3.5px;color:#111111;font-weight:bold;font-style:normal;font-family:'Liberation Sans',sans-serif;transform:scaleX(0.899);transform-origin:0 0;">Add your university here</div>
<div class="b" style="left:48.3px;top:132.2px;text-shadow:0 0 .6px #2e2e2e88;white-space:nowrap;font-size:2.9000000000000004px;line-height:3.5px;color:#2e2e2e;font-weight:normal;font-style:normal;font-family:'Liberation Sans',sans-serif;transform:scaleX(0.708);transform-origin:0 0;">YYYY - YYYY</div>
<div class="b" style="left:65.7px;top:132.2px;text-shadow:0 0 .6px #2e2e2e88;white-space:nowrap;font-size:2.9000000000000004px;line-height:3.5px;color:#2e2e2e;font-weight:normal;font-style:normal;font-family:'Liberation Sans',sans-serif;transform:scaleX(0.866);transform-origin:0 0;">Add your degree here</div>
<div class="b" style="left:56.0px;top:134.4px;width:65.0px;height:6.0px;clip-path:inset(-1px 0 -1px 0);white-space:nowrap;text-shadow:0 0 .6px #2e2e2e88;font-size:2.9000000000000004px;line-height:6.0px;color:#2e2e2e;font-weight:normal;font-style:normal;font-family:'Liberation Sans',sans-serif;text-align:left;opacity:1">you through adding content for each section. Use as is, or eas</div>
<div class="b" style="left:56.0px;top:138.0px;width:34.8px;height:6.0px;clip-path:inset(-1px 0 -1px 0);white-space:nowrap;text-shadow:0 0 .6px #2e2e2e88;font-size:2.9000000000000004px;line-height:6.0px;color:#2e2e2e;font-weight:normal;font-style:normal;font-family:'Liberation Sans',sans-serif;text-align:left;opacity:1">section. Use as is, or easily custom</div>
<div class="b" style="left:52.0px;top:136.3px;width:1.0px;height:1.0px;background:#222;border-radius:0.5px;"></div>
<div class="b" style="left:48.3px;top:147.0px;text-shadow:0 0 .6px #11111188;white-space:nowrap;font-size:2.9000000000000004px;line-height:3.5px;color:#111111;font-weight:bold;font-style:normal;font-family:'Liberation Sans',sans-serif;transform:scaleX(0.899);transform-origin:0 0;">Add your university here</div>
<div class="b" style="left:48.3px;top:150.6px;text-shadow:0 0 .6px #2e2e2e88;white-space:nowrap;font-size:2.9000000000000004px;line-height:3.5px;color:#2e2e2e;font-weight:normal;font-style:normal;font-family:'Liberation Sans',sans-serif;transform:scaleX(0.708);transform-origin:0 0;">YYYY - YYYY</div>
<div class="b" style="left:65.7px;top:150.6px;text-shadow:0 0 .6px #2e2e2e88;white-space:nowrap;font-size:2.9000000000000004px;line-height:3.5px;color:#2e2e2e;font-weight:normal;font-style:normal;font-family:'Liberation Sans',sans-serif;transform:scaleX(0.866);transform-origin:0 0;">Add your degree here</div>
<div class="b" style="left:56.0px;top:152.8px;width:65.0px;height:6.0px;clip-path:inset(-1px 0 -1px 0);white-space:nowrap;text-shadow:0 0 .6px #2e2e2e88;font-size:2.9000000000000004px;line-height:6.0px;color:#2e2e2e;font-weight:normal;font-style:normal;font-family:'Liberation Sans',sans-serif;text-align:left;opacity:1">ze with your own images, fonts, and colors. This modern and ver</div>
<div class="b" style="left:56.0px;top:156.4px;width:34.8px;height:6.0px;clip-path:inset(-1px 0 -1px 0);white-space:nowrap;text-shadow:0 0 .6px #2e2e2e88;font-size:2.9000000000000004px;line-height:6.0px;color:#2e2e2e;font-weight:normal;font-style:normal;font-family:'Liberation Sans',sans-serif;text-align:left;opacity:1">olors. This modern and versatile for</div>
<div class="b" style="left:52.0px;top:154.7px;width:1.0px;height:1.0px;background:#222;border-radius:0.5px;"></div>
<div class="b" style="left:12.9px;top:172.1px;text-shadow:0 0 .6px #11111188;white-space:nowrap;font-size:2.9000000000000004px;line-height:3.5px;color:#111111;font-weight:bold;font-style:normal;font-family:'Liberation Sans',sans-serif;transform:scaleX(0.844);transform-origin:0 0;">SKILLS</div>
<div class="b" style="left:48.3px;top:170.5px;width:64.6px;height:6.0px;clip-path:inset(-1px 0 -1px 0);white-space:nowrap;text-shadow:0 0 .6px #2e2e2e88;font-size:2.9000000000000004px;line-height:6.0px;color:#2e2e2e;font-weight:normal;font-style:normal;font-family:'Liberation Sans',sans-serif;text-align:left;opacity:1">at includes space for all the details you would like to includ</div>
</div>
<div class="b" style="left:160px;top:116px;width:135.600px;height:200px;overflow:hidden;border-radius:4px;background:#fff;">
<div class="b" style="left:16.8px;top:20.6px;text-shadow:0 0 .3px #1a1a1a88;white-space:nowrap;font-size:8.2px;line-height:9.8px;color:#1a1a1a;font-weight:bold;font-style:normal;font-family:'Liberation Sans',sans-serif;transform:scaleX(0.624);transform-origin:0 0;">ADD NAME HERE</div>
<div class="b" style="left:16.8px;top:33.8px;text-shadow:0 0 .6px #1a1a1a88;white-space:nowrap;font-size:2.6px;line-height:3.1px;color:#1a1a1a;font-weight:bold;font-style:normal;font-family:'Liberation Sans',sans-serif;transform:scaleX(0.843);transform-origin:0 0;">ADD PROFESSIONAL TITLE HERE</div>
<div class="b" style="left:96.5px;top:21.6px;width:23.1px;height:17.8px;background:#f1f1f1;border-radius:0px;"></div>
<div class="b" style="left:104.2px;top:26.6px;text-shadow:0 0 .3px #1a1a1a88;white-space:nowrap;font-size:6.6px;line-height:7.9px;color:#1a1a1a;font-weight:bold;font-style:normal;font-family:'Liberation Sans',sans-serif;transform:scaleX(0.755);transform-origin:0 0;">AB</div>
<div class="b" style="left:16.8px;top:43.3px;width:102.8px;height:0.5px;background:#e2e2e2;border-radius:0px;"></div>
<div class="b" style="left:23.6px;top:46.5px;width:27.4px;height:6.0px;clip-path:inset(-1px 0 -1px 0);white-space:nowrap;text-shadow:0 0 .6px #c2417c88;font-size:2.6px;line-height:6.0px;color:#c2417c;font-weight:normal;font-style:normal;font-family:'Liberation Sans',sans-serif;text-align:left;opacity:1">you would like to include. Simpl</div>
<div class="b" style="left:16.8px;top:48.2px;width:1.4px;height:1.4px;background:#888;border-radius:0px;"></div>
<div class="b" style="left:23.6px;top:51.4px;width:17.9px;height:6.0px;clip-path:inset(-1px 0 -1px 0);white-space:nowrap;text-shadow:0 0 .6px #33333388;font-size:2.6px;line-height:6.0px;color:#333333;font-weight:normal;font-style:normal;font-family:'Liberation Sans',sans-serif;text-align:left;opacity:1">place this content with</div>
<div class="b" style="left:16.8px;top:53.1px;width:1.4px;height:1.4px;background:#888;border-radius:0px;"></div>
<div class="b" style="left:23.6px;top:54.7px;width:21.6px;height:6.0px;clip-path:inset(-1px 0 -1px 0);white-space:nowrap;text-shadow:0 0 .6px #33333388;font-size:2.6px;line-height:6.0px;color:#333333;font-weight:normal;font-style:normal;font-family:'Liberation Sans',sans-serif;text-align:left;opacity:1">tart creating a more polish</div>
<div class="b" style="left:16.8px;top:56.4px;width:1.4px;height:1.4px;background:#888;border-radius:0px;"></div>
<div class="b" style="left:23.6px;top:58.2px;width:19.5px;height:6.0px;clip-path:inset(-1px 0 -1px 0);white-space:nowrap;text-shadow:0 0 .6px #33333388;font-size:2.6px;line-height:6.0px;color:#333333;font-weight:normal;font-style:normal;font-family:'Liberation Sans',sans-serif;text-align:left;opacity:1">document. Add content he</div>
<div class="b" style="left:16.8px;top:59.9px;width:1.4px;height:1.4px;background:#888;border-radius:0px;"></div>
<div class="b" style="left:61.6px;top:46.5px;width:56.7px;height:6.0px;clip-path:inset(-1px 0 -1px 0);white-space:nowrap;text-shadow:0 0 .6px #2e2e2e88;font-size:2.6px;line-height:6.0px;color:#2e2e2e;font-weight:normal;font-style:normal;font-family:'Liberation Sans',sans-serif;text-align:left;opacity:1">plate will guide you through adding content for each section.</div>
<div class="b" style="left:61.6px;top:49.6px;width:55.4px;height:6.0px;clip-path:inset(-1px 0 -1px 0);white-space:nowrap;text-shadow:0 0 .6px #2e2e2e88;font-size:2.6px;line-height:6.0px;color:#2e2e2e;font-weight:normal;font-style:normal;font-family:'Liberation Sans',sans-serif;text-align:left;opacity:1">ontent for each section. Use as is, or easily customize with</div>
<div class="b" style="left:61.6px;top:52.9px;width:57.1px;height:6.0px;clip-path:inset(-1px 0 -1px 0);white-space:nowrap;text-shadow:0 0 .6px #2e2e2e88;font-size:2.6px;line-height:6.0px;color:#2e2e2e;font-weight:normal;font-style:normal;font-family:'Liberation Sans',sans-serif;text-align:left;opacity:1">r easily customize with your own images, fonts, and colors. Th</div>
<div class="b" style="left:61.6px;top:56.1px;width:55.9px;height:6.0px;clip-path:inset(-1px 0 -1px 0);white-space:nowrap;text-shadow:0 0 .6px #2e2e2e88;font-size:2.6px;line-height:6.0px;color:#2e2e2e;font-weight:normal;font-style:normal;font-family:'Liberation Sans',sans-serif;text-align:left;opacity:1">es, fonts, and colors. This modern and versatile format inclu</div>
<div class="b" style="left:61.6px;top:59.4px;width:56.9px;height:6.0px;clip-path:inset(-1px 0 -1px 0);white-space:nowrap;text-shadow:0 0 .6px #2e2e2e88;font-size:2.6px;line-height:6.0px;color:#2e2e2e;font-weight:normal;font-style:normal;font-family:'Liberation Sans',sans-serif;text-align:left;opacity:1">d versatile format includes space for all the details you woul</div>
<div class="b" style="left:61.6px;top:62.7px;width:8.4px;height:6.0px;clip-path:inset(-1px 0 -1px 0);white-space:nowrap;text-shadow:0 0 .6px #2e2e2e88;font-size:2.6px;line-height:6.0px;color:#2e2e2e;font-weight:normal;font-style:normal;font-family:'Liberation Sans',sans-serif;text-align:left;opacity:1">all the detai</div>
<div class="b" style="left:16.8px;top:69.0px;width:36.6px;height:0.5px;background:#e6e6e6;border-radius:0px;"></div>
<div class="b" style="left:61.6px;top:69.0px;width:58.0px;height:0.5px;background:#e6e6e6;border-radius:0px;"></div>
<div class="b" style="left:16.8px;top:73.3px;text-shadow:0 0 .6px #11111188;white-space:nowrap;font-size:2.6px;line-height:3.1px;color:#111111;font-weight:bold;font-style:normal;font-family:'Liberation Sans',sans-serif;transform:scaleX(0.865);transform-origin:0 0;">EDUCATION</div>
<div class="b" style="left:16.8px;top:77.6px;text-shadow:0 0 .6px #11111188;white-space:nowrap;font-size:2.6px;line-height:3.1px;color:#111111;font-weight:bold;font-style:normal;font-family:'Liberation Sans',sans-serif;transform:scaleX(0.759);transform-origin:0 0;">ADD DEGREE HERE</div>
<div class="b" style="left:16.8px;top:80.8px;width:21.2px;height:6.0px;clip-path:inset(-1px 0 -1px 0);white-space:nowrap;text-shadow:0 0 .6px #2e2e2e88;font-size:2.6px;line-height:6.0px;color:#2e2e2e;font-weight:normal;font-style:normal;font-family:'Liberation Sans',sans-serif;text-align:left;opacity:1">clude. Simply replace this</div>
<div class="b" style="left:16.8px;top:85.8px;text-shadow:0 0 .6px #2e2e2e88;white-space:nowrap;font-size:2.6px;line-height:3.1px;color:#2e2e2e;font-weight:normal;font-style:normal;font-family:'Liberation Sans',sans-serif;transform:scaleX(0.911);transform-origin:0 0;">MM/YYYY - MM/YYYY</div>
<div class="b" style="left:16.8px;top:92.6px;text-shadow:0 0 .6px #11111188;white-space:nowrap;font-size:2.6px;line-height:3.1px;color:#111111;font-weight:bold;font-style:normal;font-family:'Liberation Sans',sans-serif;transform:scaleX(0.759);transform-origin:0 0;">ADD DEGREE HERE</div>
<div class="b" style="left:16.8px;top:95.8px;width:21.2px;height:6.0px;clip-path:inset(-1px 0 -1px 0);white-space:nowrap;text-shadow:0 0 .6px #2e2e2e88;font-size:2.6px;line-height:6.0px;color:#2e2e2e;font-weight:normal;font-style:normal;font-family:'Liberation Sans',sans-serif;text-align:left;opacity:1">th your own to start creati</div>
<div class="b" style="left:16.8px;top:100.8px;text-shadow:0 0 .6px #2e2e2e88;white-space:nowrap;font-size:2.6px;line-height:3.1px;color:#2e2e2e;font-weight:normal;font-style:normal;font-family:'Liberation Sans',sans-serif;transform:scaleX(0.911);transform-origin:0 0;">MM/YYYY - MM/YYYY</div>
<div class="b" style="left:16.8px;top:105.2px;width:36.6px;height:0.5px;background:#e6e6e6;border-radius:0px;"></div>
<div class="b" style="left:16.8px;top:108.6px;text-shadow:0 0 .6px #11111188;white-space:nowrap;font-size:2.6px;line-height:3.1px;color:#111111;font-weight:bold;font-style:normal;font-family:'Liberation Sans',sans-serif;transform:scaleX(0.855);transform-origin:0 0;">SKILLS</div>
<div class="b" style="left:16.8px;top:113.1px;text-shadow:0 0 .6px #11111188;white-space:nowrap;font-size:2.6px;line-height:3.1px;color:#111111;font-weight:bold;font-style:normal;font-family:'Liberation Sans',sans-serif;transform:scaleX(0.765);transform-origin:0 0;">PROFESSIONAL</div>
<div class="b" style="left:16.8px;top:118.2px;text-shadow:0 0 .6px #2e2e2e88;white-space:nowrap;font-size:2.6px;line-height:3.1px;color:#2e2e2e;font-weight:normal;font-style:normal;font-family:'Liberation Sans',sans-serif;transform:scaleX(0.961);transform-origin:0 0;">Add skill here</div>
<div class="b" style="left:16.8px;top:121.5px;text-shadow:0 0 .6px #2e2e2e88;white-space:nowrap;font-size:2.6px;line-height:3.1px;color:#2e2e2e;font-weight:normal;font-style:normal;font-family:'Liberation Sans',sans-serif;transform:scaleX(0.961);transform-origin:0 0;">Add skill here</div>
<div class="b" style="left:16.8px;top:124.7px;text-shadow:0 0 .6px #2e2e2e88;white-space:nowrap;font-size:2.6px;line-height:3.1px;color:#2e2e2e;font-weight:normal;font-style:normal;font-family:'Liberation Sans',sans-serif;transform:scaleX(0.961);transform-origin:0 0;">Add skill here</div>
<div class="b" style="left:16.8px;top:128.0px;text-shadow:0 0 .6px #2e2e2e88;white-space:nowrap;font-size:2.6px;line-height:3.1px;color:#2e2e2e;font-weight:normal;font-style:normal;font-family:'Liberation Sans',sans-serif;transform:scaleX(0.961);transform-origin:0 0;">Add skill here</div>
<div class="b" style="left:16.8px;top:131.2px;text-shadow:0 0 .6px #2e2e2e88;white-space:nowrap;font-size:2.6px;line-height:3.1px;color:#2e2e2e;font-weight:normal;font-style:normal;font-family:'Liberation Sans',sans-serif;transform:scaleX(0.961);transform-origin:0 0;">Add skill here</div>
<div class="b" style="left:16.8px;top:134.5px;text-shadow:0 0 .6px #2e2e2e88;white-space:nowrap;font-size:2.6px;line-height:3.1px;color:#2e2e2e;font-weight:normal;font-style:normal;font-family:'Liberation Sans',sans-serif;transform:scaleX(0.961);transform-origin:0 0;">Add skill here</div>
<div class="b" style="left:16.8px;top:137.7px;text-shadow:0 0 .6px #2e2e2e88;white-space:nowrap;font-size:2.6px;line-height:3.1px;color:#2e2e2e;font-weight:normal;font-style:normal;font-family:'Liberation Sans',sans-serif;transform:scaleX(0.961);transform-origin:0 0;">Add skill here</div>
<div class="b" style="left:16.8px;top:141.0px;text-shadow:0 0 .6px #2e2e2e88;white-space:nowrap;font-size:2.6px;line-height:3.1px;color:#2e2e2e;font-weight:normal;font-style:normal;font-family:'Liberation Sans',sans-serif;transform:scaleX(0.961);transform-origin:0 0;">Add skill here</div>
<div class="b" style="left:16.8px;top:144.2px;text-shadow:0 0 .6px #2e2e2e88;white-space:nowrap;font-size:2.6px;line-height:3.1px;color:#2e2e2e;font-weight:normal;font-style:normal;font-family:'Liberation Sans',sans-serif;transform:scaleX(0.961);transform-origin:0 0;">Add skill here</div>
<div class="b" style="left:16.8px;top:147.5px;text-shadow:0 0 .6px #2e2e2e88;white-space:nowrap;font-size:2.6px;line-height:3.1px;color:#2e2e2e;font-weight:normal;font-style:normal;font-family:'Liberation Sans',sans-serif;transform:scaleX(0.961);transform-origin:0 0;">Add skill here</div>
<div class="b" style="left:16.8px;top:150.7px;text-shadow:0 0 .6px #2e2e2e88;white-space:nowrap;font-size:2.6px;line-height:3.1px;color:#2e2e2e;font-weight:normal;font-style:normal;font-family:'Liberation Sans',sans-serif;transform:scaleX(0.961);transform-origin:0 0;">Add skill here</div>
<div class="b" style="left:16.8px;top:154.0px;text-shadow:0 0 .6px #2e2e2e88;white-space:nowrap;font-size:2.6px;line-height:3.1px;color:#2e2e2e;font-weight:normal;font-style:normal;font-family:'Liberation Sans',sans-serif;transform:scaleX(0.961);transform-origin:0 0;">Add skill here</div>
<div class="b" style="left:16.8px;top:160.3px;text-shadow:0 0 .6px #11111188;white-space:nowrap;font-size:2.6px;line-height:3.1px;color:#111111;font-weight:bold;font-style:normal;font-family:'Liberation Sans',sans-serif;transform:scaleX(0.786);transform-origin:0 0;">LANGUAGE</div>
<div class="b" style="left:16.8px;top:165.7px;text-shadow:0 0 .6px #2e2e2e88;white-space:nowrap;font-size:2.6px;line-height:3.1px;color:#2e2e2e;font-weight:normal;font-style:normal;font-family:'Liberation Sans',sans-serif;transform:scaleX(0.947);transform-origin:0 0;">Add language here</div>
<div class="b" style="left:16.8px;top:169.0px;text-shadow:0 0 .6px #2e2e2e88;white-space:nowrap;font-size:2.6px;line-height:3.1px;color:#2e2e2e;font-weight:normal;font-style:normal;font-family:'Liberation Sans',sans-serif;transform:scaleX(0.947);transform-origin:0 0;">Add language here</div>
<div class="b" style="left:61.6px;top:73.3px;text-shadow:0 0 .6px #11111188;white-space:nowrap;font-size:2.6px;line-height:3.1px;color:#111111;font-weight:bold;font-style:normal;font-family:'Liberation Sans',sans-serif;transform:scaleX(0.835);transform-origin:0 0;">EXPERIENCE</div>
<div class="b" style="left:61.6px;top:77.6px;text-shadow:0 0 .6px #11111188;white-space:nowrap;font-size:2.6px;line-height:3.1px;color:#111111;font-weight:bold;font-style:normal;font-family:'Liberation Sans',sans-serif;transform:scaleX(0.786);transform-origin:0 0;">ADD POSITION HERE</div>
<div class="b" style="left:61.6px;top:82.5px;text-shadow:0 0 .6px #2e2e2e88;white-space:nowrap;font-size:2.6px;line-height:3.1px;color:#2e2e2e;font-weight:normal;font-style:normal;font-family:'Liberation Sans',sans-serif;transform:scaleX(0.935);transform-origin:0 0;">Add company here | MM/YYYY - MM/YYYY</div>
<div class="b" style="left:61.6px;top:85.3px;width:51.4px;height:6.0px;clip-path:inset(-1px 0 -1px 0);white-space:nowrap;text-shadow:0 0 .6px #2e2e2e88;font-size:2.6px;line-height:6.0px;color:#2e2e2e;font-weight:normal;font-style:normal;font-family:'Liberation Sans',sans-serif;text-align:left;opacity:1">polished looking document. Add content here. This templa</div>
<div class="b" style="left:61.6px;top:88.6px;width:56.4px;height:6.0px;clip-path:inset(-1px 0 -1px 0);white-space:nowrap;text-shadow:0 0 .6px #2e2e2e88;font-size:2.6px;line-height:6.0px;color:#2e2e2e;font-weight:normal;font-style:normal;font-family:'Liberation Sans',sans-serif;text-align:left;opacity:1">t here. This template will guide you through adding content f</div>
<div class="b" style="left:61.6px;top:91.9px;width:54.9px;height:6.0px;clip-path:inset(-1px 0 -1px 0);white-space:nowrap;text-shadow:0 0 .6px #2e2e2e88;font-size:2.6px;line-height:6.0px;color:#2e2e2e;font-weight:normal;font-style:normal;font-family:'Liberation Sans',sans-serif;text-align:left;opacity:1">through adding content for each section. Use as is, or easil</div>
<div class="b" style="left:61.6px;top:95.2px;width:56.4px;height:6.0px;clip-path:inset(-1px 0 -1px 0);white-space:nowrap;text-shadow:0 0 .6px #2e2e2e88;font-size:2.6px;line-height:6.0px;color:#2e2e2e;font-weight:normal;font-style:normal;font-family:'Liberation Sans',sans-serif;text-align:left;opacity:1">on. Use as is, or easily customize with your own images, font</div>
<div class="b" style="left:61.6px;top:98.5px;width:56.7px;height:6.0px;clip-path:inset(-1px 0 -1px 0);white-space:nowrap;text-shadow:0 0 .6px #2e2e2e88;font-size:2.6px;line-height:6.0px;color:#2e2e2e;font-weight:normal;font-style:normal;font-family:'Liberation Sans',sans-serif;text-align:left;opacity:1">th your own images, fonts, and colors. This modern and versati</div>
<div class="b" style="left:61.6px;top:101.5px;width:35.4px;height:6.0px;clip-path:inset(-1px 0 -1px 0);white-space:nowrap;text-shadow:0 0 .6px #2e2e2e88;font-size:2.6px;line-height:6.0px;color:#2e2e2e;font-weight:normal;font-style:normal;font-family:'Liberation Sans',sans-serif;text-align:left;opacity:1">. This modern and versatile format includ</div>
<div class="b" style="left:66.2px;top:106.7px;width:1.0px;height:1.0px;background:#222;border-radius:0.5px;"></div>
<div class="b" style="left:69.8px;top:104.8px;width:47.2px;height:6.0px;clip-path:inset(-1px 0 -1px 0);white-space:nowrap;text-shadow:0 0 .6px #2e2e2e88;font-size:2.6px;line-height:6.0px;color:#2e2e2e;font-weight:normal;font-style:normal;font-family:'Liberation Sans',sans-serif;text-align:left;opacity:1">cludes space for all the details you would like to i</div>
<div class="b" style="left:69.8px;top:108.1px;width:47.7px;height:6.0px;clip-path:inset(-1px 0 -1px 0);white-space:nowrap;text-shadow:0 0 .6px #2e2e2e88;font-size:2.6px;line-height:6.0px;color:#2e2e2e;font-weight:normal;font-style:normal;font-family:'Liberation Sans',sans-serif;text-align:left;opacity:1">would like to include. Simply replace this content wi</div>
<div class="b" style="left:69.8px;top:111.4px;width:47.7px;height:6.0px;clip-path:inset(-1px 0 -1px 0);white-space:nowrap;text-shadow:0 0 .6px #2e2e2e88;font-size:2.6px;line-height:6.0px;color:#2e2e2e;font-weight:normal;font-style:normal;font-family:'Liberation Sans',sans-serif;text-align:left;opacity:1">this content with your own to start creating a more</div>
<div class="b" style="left:69.8px;top:114.7px;width:44.2px;height:6.0px;clip-path:inset(-1px 0 -1px 0);white-space:nowrap;text-shadow:0 0 .6px #2e2e2e88;font-size:2.6px;line-height:6.0px;color:#2e2e2e;font-weight:normal;font-style:normal;font-family:'Liberation Sans',sans-serif;text-align:left;opacity:1">creating a more polished looking document. Add co</div>
<div class="b" style="left:69.8px;top:118.0px;width:12.2px;height:6.0px;clip-path:inset(-1px 0 -1px 0);white-space:nowrap;text-shadow:0 0 .6px #2e2e2e88;font-size:2.6px;line-height:6.0px;color:#2e2e2e;font-weight:normal;font-style:normal;font-family:'Liberation Sans',sans-serif;text-align:left;opacity:1">ment. Add content</div>
<div class="b" style="left:66.2px;top:123.2px;width:1.0px;height:1.0px;background:#222;border-radius:0.5px;"></div>
<div class="b" style="left:69.8px;top:121.3px;width:47.2px;height:6.0px;clip-path:inset(-1px 0 -1px 0);white-space:nowrap;text-shadow:0 0 .6px #2e2e2e88;font-size:2.6px;line-height:6.0px;color:#2e2e2e;font-weight:normal;font-style:normal;font-family:'Liberation Sans',sans-serif;text-align:left;opacity:1">will guide you through adding content for each sect</div>
<div class="b" style="left:69.8px;top:124.6px;width:47.7px;height:6.0px;clip-path:inset(-1px 0 -1px 0);white-space:nowrap;text-shadow:0 0 .6px #2e2e2e88;font-size:2.6px;line-height:6.0px;color:#2e2e2e;font-weight:normal;font-style:normal;font-family:'Liberation Sans',sans-serif;text-align:left;opacity:1">t for each section. Use as is, or easily customize wi</div>
<div class="b" style="left:69.8px;top:127.9px;width:47.7px;height:6.0px;clip-path:inset(-1px 0 -1px 0);white-space:nowrap;text-shadow:0 0 .6px #2e2e2e88;font-size:2.6px;line-height:6.0px;color:#2e2e2e;font-weight:normal;font-style:normal;font-family:'Liberation Sans',sans-serif;text-align:left;opacity:1">ily customize with your own images, fonts, and colors</div>
<div class="b" style="left:69.8px;top:131.2px;width:44.2px;height:6.0px;clip-path:inset(-1px 0 -1px 0);white-space:nowrap;text-shadow:0 0 .6px #2e2e2e88;font-size:2.6px;line-height:6.0px;color:#2e2e2e;font-weight:normal;font-style:normal;font-family:'Liberation Sans',sans-serif;text-align:left;opacity:1">onts, and colors. This modern and versatile forma</div>
<div class="b" style="left:69.8px;top:134.5px;width:12.2px;height:6.0px;clip-path:inset(-1px 0 -1px 0);white-space:nowrap;text-shadow:0 0 .6px #2e2e2e88;font-size:2.6px;line-height:6.0px;color:#2e2e2e;font-weight:normal;font-style:normal;font-family:'Liberation Sans',sans-serif;text-align:left;opacity:1">satile format incl</div>
<div class="b" style="left:61.6px;top:142.5px;text-shadow:0 0 .6px #11111188;white-space:nowrap;font-size:2.6px;line-height:3.1px;color:#111111;font-weight:bold;font-style:normal;font-family:'Liberation Sans',sans-serif;transform:scaleX(0.786);transform-origin:0 0;">ADD POSITION HERE</div>
<div class="b" style="left:61.6px;top:147.8px;text-shadow:0 0 .6px #2e2e2e88;white-space:nowrap;font-size:2.6px;line-height:3.1px;color:#2e2e2e;font-weight:normal;font-style:normal;font-family:'Liberation Sans',sans-serif;transform:scaleX(0.935);transform-origin:0 0;">Add company here | MM/YYYY - MM/YYYY</div>
<div class="b" style="left:61.6px;top:150.2px;width:56.4px;height:6.0px;clip-path:inset(-1px 0 -1px 0);white-space:nowrap;text-shadow:0 0 .6px #2e2e2e88;font-size:2.6px;line-height:6.0px;color:#2e2e2e;font-weight:normal;font-style:normal;font-family:'Liberation Sans',sans-serif;text-align:left;opacity:1">the details you would like to include. Simply replace this co</div>
<div class="b" style="left:61.6px;top:153.3px;width:56.7px;height:6.0px;clip-path:inset(-1px 0 -1px 0);white-space:nowrap;text-shadow:0 0 .6px #2e2e2e88;font-size:2.6px;line-height:6.0px;color:#2e2e2e;font-weight:normal;font-style:normal;font-family:'Liberation Sans',sans-serif;text-align:left;opacity:1">. Simply replace this content with your own to start creating</div>
<div class="b" style="left:61.6px;top:156.6px;width:55.4px;height:6.0px;clip-path:inset(-1px 0 -1px 0);white-space:nowrap;text-shadow:0 0 .6px #2e2e2e88;font-size:2.6px;line-height:6.0px;color:#2e2e2e;font-weight:normal;font-style:normal;font-family:'Liberation Sans',sans-serif;text-align:left;opacity:1">ur own to start creating a more polished looking document. A</div>
<div class="b" style="left:61.6px;top:159.9px;width:49.4px;height:6.0px;clip-path:inset(-1px 0 -1px 0);white-space:nowrap;text-shadow:0 0 .6px #2e2e2e88;font-size:2.6px;line-height:6.0px;color:#2e2e2e;font-weight:normal;font-style:normal;font-family:'Liberation Sans',sans-serif;text-align:left;opacity:1">hed looking document. Add content here. This template w</div>
<div class="b" style="left:61.6px;top:163.2px;width:29.4px;height:6.0px;clip-path:inset(-1px 0 -1px 0);white-space:nowrap;text-shadow:0 0 .6px #2e2e2e88;font-size:2.6px;line-height:6.0px;color:#2e2e2e;font-weight:normal;font-style:normal;font-family:'Liberation Sans',sans-serif;text-align:left;opacity:1">e. This template will guide you thr</div>
</div>
<div class="b" style="left:16px;top:368px;width:135.600px;height:200px;overflow:hidden;border-radius:4px;background:#fff;">
<div class="b" style="left:8.600px;top:25.300px;width:118.800px;height:149.300px;border:.6px solid #f3f3f3;"></div>
<div class="b" style="left:33.0px;top:24.0px;width:76.0px;height:3.0px;background:#fff;border-radius:0px;"></div>
<div class="b" style="left:33.0px;top:173.0px;width:76.0px;height:3.0px;background:#fff;border-radius:0px;"></div>
<svg class="b" style="left:0px;top:0px;" width="136" height="200" viewBox="0 0 136 200" fill="none"><defs><radialGradient id="h1" cx="35%" cy="28%" r="80%"><stop offset="0" stop-color="#ff7fb0"/><stop offset="1" stop-color="#ea2f78"/></radialGradient></defs><g transform="translate(61.2 21.3) rotate(-8) scale(9.25 8.75)"><path d="M0 .95 C-.25 .72 -1 .25 -1 -.35 C-1 -.8 -.65 -1 -.4 -1 C-.2 -1 -.05 -.88 0 -.7 C.05 -.88 .2 -1 .4 -1 C.65 -1 1 -.8 1 -.35 C1 .25 .25 .72 0 .95z" fill="url(#h1)"/></g><defs><radialGradient id="h3" cx="35%" cy="28%" r="80%"><stop offset="0" stop-color="#f07ac0"/><stop offset="1" stop-color="#c93a93"/></radialGradient></defs><g transform="translate(85.9 25.9) rotate(14) scale(6.0 6.0)"><path d="M0 .95 C-.25 .72 -1 .25 -1 -.35 C-1 -.8 -.65 -1 -.4 -1 C-.2 -1 -.05 -.88 0 -.7 C.05 -.88 .2 -1 .4 -1 C.65 -1 1 -.8 1 -.35 C1 .25 .25 .72 0 .95z" fill="url(#h3)"/></g><defs><radialGradient id="h2" cx="35%" cy="28%" r="80%"><stop offset="0" stop-color="#ffa6c9"/><stop offset="1" stop-color="#ee5d9c"/></radialGradient></defs><g transform="translate(71.9 30.8) rotate(0) scale(7.7 7.2)"><path d="M0 .95 C-.25 .72 -1 .25 -1 -.35 C-1 -.8 -.65 -1 -.4 -1 C-.2 -1 -.05 -.88 0 -.7 C.05 -.88 .2 -1 .4 -1 C.65 -1 1 -.8 1 -.35 C1 .25 .25 .72 0 .95z" fill="url(#h2)"/></g><ellipse cx="75.200" cy="19.300" rx="3" ry="2.200" stroke="#f6a8c8" stroke-width="1.100" fill="none"/><circle cx="51.400" cy="27.700" r="1.500" fill="#f29ac6"/><circle cx="55.500" cy="31.200" r=".9" fill="#9c6ad0"/><circle cx="77.600" cy="36.400" r=".9" fill="#8a70d0"/><defs><radialGradient id="h4" cx="35%" cy="28%" r="80%"><stop offset="0" stop-color="#ff7fbd"/><stop offset="1" stop-color="#c93a93"/></radialGradient></defs><g transform="translate(71.5 159.2) rotate(0) scale(12.5 11.8)"><path d="M0 .95 C-.25 .72 -1 .25 -1 -.35 C-1 -.8 -.65 -1 -.4 -1 C-.2 -1 -.05 -.88 0 -.7 C.05 -.88 .2 -1 .4 -1 C.65 -1 1 -.8 1 -.35 C1 .25 .25 .72 0 .95z" fill="url(#h4)"/></g><circle cx="81.800" cy="146.900" r=".8" fill="#f29ac6"/><circle cx="62" cy="166.400" r=".6" fill="#f29ac6"/><circle cx="80.500" cy="168.400" r=".6" fill="#f29ac6"/></svg>
<div class="b" style="left:43.1px;top:41.5px;white-space:nowrap;font-size:10.5px;line-height:12.6px;color:#3c3c3c;font-weight:normal;font-style:italic;font-family:'Liberation Serif',sans-serif;transform:scaleX(0.851);transform-origin:0 0;">Add title here</div>
<div class="b" style="left:46.2px;top:58.0px;text-shadow:0 0 .3px #ea6a8c88;white-space:nowrap;font-size:6.2px;line-height:7.4px;color:#ea6a8c;font-weight:normal;font-style:normal;font-family:'Liberation Sans',sans-serif;transform:scaleX(0.928);transform-origin:0 0;">Add subtitle here</div>
<div class="b" style="left:48.9px;top:70.3px;text-shadow:0 0 .3px #d6305888;white-space:nowrap;font-size:4.7px;line-height:5.6px;color:#d63058;font-weight:bold;font-style:normal;font-family:'Liberation Sans',sans-serif;transform:scaleX(0.867);transform-origin:0 0;">Add heading 1 here</div>
<div class="b" style="left:13.5px;top:80.2px;width:109.5px;height:6.0px;clip-path:inset(-1px 0 -1px 0);white-space:nowrap;text-shadow:0 0 .6px #11111188;font-size:2.8000000000000003px;line-height:6.0px;color:#111111;font-weight:normal;font-style:normal;font-family:'Liberation Sans',sans-serif;text-align:center;opacity:1">gh adding content for each section. Use as is, or easily customize with your own images, fonts, and colors. This modern</div>
<div class="b" style="left:12.3px;top:85.1px;width:112.0px;height:6.0px;clip-path:inset(-1px 0 -1px 0);white-space:nowrap;text-shadow:0 0 .6px #11111188;font-size:2.8000000000000003px;line-height:6.0px;color:#111111;font-weight:normal;font-style:normal;font-family:'Liberation Sans',sans-serif;text-align:center;opacity:1">se as is, or easily customize with your own images, fonts, and colors. This modern and versatile format includes space fo</div>
<div class="b" style="left:12.3px;top:90.0px;width:112.0px;height:6.0px;clip-path:inset(-1px 0 -1px 0);white-space:nowrap;text-shadow:0 0 .6px #11111188;font-size:2.8000000000000003px;line-height:6.0px;color:#111111;font-weight:normal;font-style:normal;font-family:'Liberation Sans',sans-serif;text-align:center;opacity:1">ur own images, fonts, and colors. This modern and versatile format includes space for all the details you would like to i</div>
<div class="b" style="left:12.3px;top:95.0px;width:112.0px;height:6.0px;clip-path:inset(-1px 0 -1px 0);white-space:nowrap;text-shadow:0 0 .6px #11111188;font-size:2.8000000000000003px;line-height:6.0px;color:#111111;font-weight:normal;font-style:normal;font-family:'Liberation Sans',sans-serif;text-align:center;opacity:1">s modern and versatile format includes space for all the details you would like to include. Simply replace this content w</div>
<div class="b" style="left:62.0px;top:100.1px;width:12.0px;height:6.0px;clip-path:inset(-1px 0 -1px 0);white-space:nowrap;text-shadow:0 0 .6px #11111188;font-size:2.8000000000000003px;line-height:6.0px;color:#111111;font-weight:normal;font-style:normal;font-family:'Liberation Sans',sans-serif;text-align:center;opacity:1">s space for all th</div>
<div class="b" style="left:53.0px;top:109.2px;text-shadow:0 0 .6px #e6507c88;white-space:nowrap;font-size:3.5px;line-height:4.2px;color:#e6507c;font-weight:bold;font-style:normal;font-family:'Liberation Sans',sans-serif;transform:scaleX(0.911);transform-origin:0 0;">Add heading 2 here</div>
<div class="b" style="left:12.3px;top:117.6px;width:111.4px;height:6.0px;clip-path:inset(-1px 0 -1px 0);white-space:nowrap;text-shadow:0 0 .6px #11111188;font-size:2.8000000000000003px;line-height:6.0px;color:#111111;font-weight:normal;font-style:normal;font-family:'Liberation Sans',sans-serif;text-align:center;opacity:1">like to include. Simply replace this content with your own to start creating a more polished looking document. Add conte</div>
<div class="b" style="left:13.3px;top:122.5px;width:109.9px;height:6.0px;clip-path:inset(-1px 0 -1px 0);white-space:nowrap;text-shadow:0 0 .6px #11111188;font-size:2.8000000000000003px;line-height:6.0px;color:#111111;font-weight:normal;font-style:normal;font-family:'Liberation Sans',sans-serif;text-align:center;opacity:1">content with your own to start creating a more polished looking document. Add content here. This template will guide y</div>
<div class="b" style="left:56.9px;top:127.4px;width:22.8px;height:6.0px;clip-path:inset(-1px 0 -1px 0);white-space:nowrap;text-shadow:0 0 .6px #11111188;font-size:2.8000000000000003px;line-height:6.0px;color:#111111;font-weight:normal;font-style:normal;font-family:'Liberation Sans',sans-serif;text-align:center;opacity:1">ing a more polished looking d</div>
</div>
<div class="b" style="left:160px;top:368px;width:135.600px;height:200px;overflow:hidden;border-radius:4px;background:#fff;">
<div class="b" style="left:7.8px;top:11.9px;width:35.7px;height:169.9px;background:#f4eae0;border-radius:0px;"></div>
<div class="b" style="left:12.7px;top:17.5px;width:25.9px;height:158.1px;background:#ffffff;border-radius:0px;"></div>
<svg class="b" style="left:0px;top:0px;" width="136" height="200" viewBox="0 0 136 200" fill="none"><path d="M14 18.900H37A23 25.900 0 0 1 14 44.800z" fill="#d5ae79"/><path d="M14 46.200A23 24.700 0 0 1 37 70.900H14z" fill="#efe3d7"/><path d="M37 72.300A23.600 24.450 0 0 0 37 121.200z" fill="#fbf6ea"/><path d="M14 122.200H37A23 24.700 0 0 1 14 146.900z" fill="#efe3d7"/><path d="M14 148.300A23 25.900 0 0 1 37 174.200H14z" fill="#d5ae79"/></svg>
<div class="b" style="left:49.7px;top:19.2px;width:1.8px;height:1.8px;background:#b8782a;border-radius:0px;"></div>
<div class="b" style="left:52.0px;top:12.7px;text-shadow:0 0 .3px #b8782a88;white-space:nowrap;font-size:9.4px;line-height:11.3px;color:#b8782a;font-weight:bold;font-style:italic;font-family:'Liberation Serif',sans-serif;transform:scaleX(1.082);transform-origin:0 0;">Add title here</div>
<div class="b" style="left:49.7px;top:31.8px;text-shadow:0 0 .3px #1a1a1a88;white-space:nowrap;font-size:6.3px;line-height:7.6px;color:#1a1a1a;font-weight:normal;font-style:normal;font-family:'Liberation Sans',sans-serif;transform:scaleX(0.969);transform-origin:0 0;">Add subtitle here</div>
<div class="b" style="left:49.7px;top:47.3px;text-shadow:0 0 .3px #b8782a88;white-space:nowrap;font-size:5.2px;line-height:6.2px;color:#b8782a;font-weight:bold;font-style:italic;font-family:'Liberation Serif',sans-serif;transform:scaleX(1.080);transform-origin:0 0;">Add heading 1 here</div>
<div class="b" style="left:49.7px;top:57.4px;width:71.0px;height:6.0px;clip-path:inset(-1px 0 -1px 0);white-space:nowrap;text-shadow:0 0 .6px #11111188;font-size:3.0px;line-height:6.0px;color:#111111;font-weight:normal;font-style:normal;font-family:'Liberation Sans',sans-serif;text-align:left;opacity:1">Add content here. This template will guide you through adding content fo</div>
<div class="b" style="left:49.7px;top:61.5px;width:74.8px;height:6.0px;clip-path:inset(-1px 0 -1px 0);white-space:nowrap;text-shadow:0 0 .6px #11111188;font-size:3.0px;line-height:6.0px;color:#111111;font-weight:normal;font-style:normal;font-family:'Liberation Sans',sans-serif;text-align:left;opacity:1">guide you through adding content for each section. Use as is, or easily cust</div>
<div class="b" style="left:49.7px;top:65.6px;width:74.1px;height:6.0px;clip-path:inset(-1px 0 -1px 0);white-space:nowrap;text-shadow:0 0 .6px #11111188;font-size:3.0px;line-height:6.0px;color:#111111;font-weight:normal;font-style:normal;font-family:'Liberation Sans',sans-serif;text-align:left;opacity:1">each section. Use as is, or easily customize with your own images, fonts, a</div>
<div class="b" style="left:49.7px;top:69.5px;width:71.8px;height:6.0px;clip-path:inset(-1px 0 -1px 0);white-space:nowrap;text-shadow:0 0 .6px #11111188;font-size:3.0px;line-height:6.0px;color:#111111;font-weight:normal;font-style:normal;font-family:'Liberation Sans',sans-serif;text-align:left;opacity:1">ustomize with your own images, fonts, and colors. This modern and versatil</div>
<div class="b" style="left:49.7px;top:73.4px;width:70.3px;height:6.0px;clip-path:inset(-1px 0 -1px 0);white-space:nowrap;text-shadow:0 0 .6px #11111188;font-size:3.0px;line-height:6.0px;color:#111111;font-weight:normal;font-style:normal;font-family:'Liberation Sans',sans-serif;text-align:left;opacity:1">and colors. This modern and versatile format includes space for all the</div>
<div class="b" style="left:49.7px;top:77.5px;width:66.3px;height:6.0px;clip-path:inset(-1px 0 -1px 0);white-space:nowrap;text-shadow:0 0 .6px #11111188;font-size:3.0px;line-height:6.0px;color:#111111;font-weight:normal;font-style:normal;font-family:'Liberation Sans',sans-serif;text-align:left;opacity:1">e format includes space for all the details you would like to include</div>
<div class="b" style="left:49.7px;top:81.4px;width:58.8px;height:6.0px;clip-path:inset(-1px 0 -1px 0);white-space:nowrap;text-shadow:0 0 .6px #11111188;font-size:3.0px;line-height:6.0px;color:#111111;font-weight:normal;font-style:normal;font-family:'Liberation Sans',sans-serif;text-align:left;opacity:1">etails you would like to include. Simply replace this content</div>
<div class="b" style="left:49.7px;top:89.6px;text-shadow:0 0 .6px #b8782a88;white-space:nowrap;font-size:4px;line-height:4.8px;color:#b8782a;font-weight:bold;font-style:italic;font-family:'Liberation Serif',sans-serif;transform:scaleX(1.101);transform-origin:0 0;">Add heading 2 here</div>
<div class="b" style="left:49.7px;top:97.8px;width:68.8px;height:6.0px;clip-path:inset(-1px 0 -1px 0);white-space:nowrap;text-shadow:0 0 .6px #11111188;font-size:3.0px;line-height:6.0px;color:#111111;font-weight:normal;font-style:normal;font-family:'Liberation Sans',sans-serif;text-align:left;opacity:1">ply replace this content with your own to start creating a more polishe</div>
<div class="b" style="left:49.7px;top:101.9px;width:69.8px;height:6.0px;clip-path:inset(-1px 0 -1px 0);white-space:nowrap;text-shadow:0 0 .6px #11111188;font-size:3.0px;line-height:6.0px;color:#111111;font-weight:normal;font-style:normal;font-family:'Liberation Sans',sans-serif;text-align:left;opacity:1">n to start creating a more polished looking document. Add content here.</div>
<div class="b" style="left:49.7px;top:105.9px;width:68.3px;height:6.0px;clip-path:inset(-1px 0 -1px 0);white-space:nowrap;text-shadow:0 0 .6px #11111188;font-size:3.0px;line-height:6.0px;color:#111111;font-weight:normal;font-style:normal;font-family:'Liberation Sans',sans-serif;text-align:left;opacity:1">ooking document. Add content here. This template will guide you through</div>
<div class="b" style="left:49.7px;top:110.0px;width:73.3px;height:6.0px;clip-path:inset(-1px 0 -1px 0);white-space:nowrap;text-shadow:0 0 .6px #11111188;font-size:3.0px;line-height:6.0px;color:#111111;font-weight:normal;font-style:normal;font-family:'Liberation Sans',sans-serif;text-align:left;opacity:1">is template will guide you through adding content for each section. Use as</div>
<div class="b" style="left:49.7px;top:114.1px;width:72.3px;height:6.0px;clip-path:inset(-1px 0 -1px 0);white-space:nowrap;text-shadow:0 0 .6px #11111188;font-size:3.0px;line-height:6.0px;color:#111111;font-weight:normal;font-style:normal;font-family:'Liberation Sans',sans-serif;text-align:left;opacity:1">ding content for each section. Use as is, or easily customize with your ow</div>
<div class="b" style="left:49.7px;top:118.2px;width:75.8px;height:6.0px;clip-path:inset(-1px 0 -1px 0);white-space:nowrap;text-shadow:0 0 .6px #11111188;font-size:3.0px;line-height:6.0px;color:#111111;font-weight:normal;font-style:normal;font-family:'Liberation Sans',sans-serif;text-align:left;opacity:1">is, or easily customize with your own images, fonts, and colors. This modern</div>
<div class="b" style="left:49.7px;top:122.2px;width:69.1px;height:6.0px;clip-path:inset(-1px 0 -1px 0);white-space:nowrap;text-shadow:0 0 .6px #11111188;font-size:3.0px;line-height:6.0px;color:#111111;font-weight:normal;font-style:normal;font-family:'Liberation Sans',sans-serif;text-align:left;opacity:1">n images, fonts, and colors. This modern and versatile format includes</div>
<div class="b" style="left:49.7px;top:126.3px;width:75.8px;height:6.0px;clip-path:inset(-1px 0 -1px 0);white-space:nowrap;text-shadow:0 0 .6px #11111188;font-size:3.0px;line-height:6.0px;color:#111111;font-weight:normal;font-style:normal;font-family:'Liberation Sans',sans-serif;text-align:left;opacity:1">ern and versatile format includes space for all the details you would like to</div>
<div class="b" style="left:49.7px;top:130.4px;width:75.3px;height:6.0px;clip-path:inset(-1px 0 -1px 0);white-space:nowrap;text-shadow:0 0 .6px #11111188;font-size:3.0px;line-height:6.0px;color:#111111;font-weight:normal;font-style:normal;font-family:'Liberation Sans',sans-serif;text-align:left;opacity:1">ce for all the details you would like to include. Simply replace this content</div>
<div class="b" style="left:49.7px;top:134.4px;width:19.1px;height:6.0px;clip-path:inset(-1px 0 -1px 0);white-space:nowrap;text-shadow:0 0 .6px #11111188;font-size:3.0px;line-height:6.0px;color:#111111;font-weight:normal;font-style:normal;font-family:'Liberation Sans',sans-serif;text-align:left;opacity:1">to include. Simply repl</div>
<div class="b" style="left:49.7px;top:141.8px;width:68.8px;height:6.0px;clip-path:inset(-1px 0 -1px 0);white-space:nowrap;text-shadow:0 0 .6px #11111188;font-size:3.0px;line-height:6.0px;color:#111111;font-weight:normal;font-style:normal;font-family:'Liberation Sans',sans-serif;text-align:left;opacity:1">ent with your own to start creating a more polished looking document. A</div>
<div class="b" style="left:49.7px;top:145.9px;width:69.8px;height:6.0px;clip-path:inset(-1px 0 -1px 0);white-space:nowrap;text-shadow:0 0 .6px #11111188;font-size:3.0px;line-height:6.0px;color:#111111;font-weight:normal;font-style:normal;font-family:'Liberation Sans',sans-serif;text-align:left;opacity:1">more polished looking document. Add content here. This template will gu</div>
<div class="b" style="left:49.7px;top:149.9px;width:68.3px;height:6.0px;clip-path:inset(-1px 0 -1px 0);white-space:nowrap;text-shadow:0 0 .6px #11111188;font-size:3.0px;line-height:6.0px;color:#111111;font-weight:normal;font-style:normal;font-family:'Liberation Sans',sans-serif;text-align:left;opacity:1">content here. This template will guide you through adding content for e</div>
<div class="b" style="left:49.7px;top:154.0px;width:73.3px;height:6.0px;clip-path:inset(-1px 0 -1px 0);white-space:nowrap;text-shadow:0 0 .6px #11111188;font-size:3.0px;line-height:6.0px;color:#111111;font-weight:normal;font-style:normal;font-family:'Liberation Sans',sans-serif;text-align:left;opacity:1">e you through adding content for each section. Use as is, or easily customi</div>
<div class="b" style="left:49.7px;top:158.1px;width:72.3px;height:6.0px;clip-path:inset(-1px 0 -1px 0);white-space:nowrap;text-shadow:0 0 .6px #11111188;font-size:3.0px;line-height:6.0px;color:#111111;font-weight:normal;font-style:normal;font-family:'Liberation Sans',sans-serif;text-align:left;opacity:1">section. Use as is, or easily customize with your own images, fonts, and</div>
<div class="b" style="left:49.7px;top:162.1px;width:75.8px;height:6.0px;clip-path:inset(-1px 0 -1px 0);white-space:nowrap;text-shadow:0 0 .6px #11111188;font-size:3.0px;line-height:6.0px;color:#111111;font-weight:normal;font-style:normal;font-family:'Liberation Sans',sans-serif;text-align:left;opacity:1">ize with your own images, fonts, and colors. This modern and versatile format</div>
<div class="b" style="left:49.7px;top:166.2px;width:69.1px;height:6.0px;clip-path:inset(-1px 0 -1px 0);white-space:nowrap;text-shadow:0 0 .6px #11111188;font-size:3.0px;line-height:6.0px;color:#111111;font-weight:normal;font-style:normal;font-family:'Liberation Sans',sans-serif;text-align:left;opacity:1">colors. This modern and versatile format includes space for all the det</div>
<div class="b" style="left:49.7px;top:170.3px;width:75.8px;height:6.0px;clip-path:inset(-1px 0 -1px 0);white-space:nowrap;text-shadow:0 0 .6px #11111188;font-size:3.0px;line-height:6.0px;color:#111111;font-weight:normal;font-style:normal;font-family:'Liberation Sans',sans-serif;text-align:left;opacity:1">mat includes space for all the details you would like to include. Simply repla</div>
<div class="b" style="left:49.7px;top:174.4px;width:75.3px;height:6.0px;clip-path:inset(-1px 0 -1px 0);white-space:nowrap;text-shadow:0 0 .6px #11111188;font-size:3.0px;line-height:6.0px;color:#111111;font-weight:normal;font-style:normal;font-family:'Liberation Sans',sans-serif;text-align:left;opacity:1">s you would like to include. Simply replace this content with your own to sta</div>
<div class="b" style="left:49.7px;top:178.4px;width:19.1px;height:6.0px;clip-path:inset(-1px 0 -1px 0);white-space:nowrap;text-shadow:0 0 .6px #11111188;font-size:3.0px;line-height:6.0px;color:#111111;font-weight:normal;font-style:normal;font-family:'Liberation Sans',sans-serif;text-align:left;opacity:1">eplace this content with</div>
</div>
<div class="b" style="left:16px;top:620px;width:135.600px;height:200px;overflow:hidden;border-radius:4px;background:#fff;">
<div class="b" style="left:16.1px;top:21.2px;width:3.2px;height:11.2px;background:#f1f1f1;border-radius:0px;"></div>
<div class="b" style="left:115.9px;top:21.2px;width:3.7px;height:11.2px;background:#f1f1f1;border-radius:0px;"></div>
<div class="b" style="left:24.6px;top:21.1px;text-shadow:0 0 .3px #16161688;white-space:nowrap;font-size:9.6px;line-height:11.5px;color:#161616;font-weight:bold;font-style:normal;font-family:'Liberation Sans',sans-serif;transform:scaleX(0.776);transform-origin:0 0;">Add name here</div>
<div class="b" style="left:16.1px;top:40.4px;width:19.5px;height:6.0px;clip-path:inset(-1px 0 -1px 0);white-space:nowrap;text-shadow:0 0 .6px #22222288;font-size:3.1px;line-height:6.0px;color:#222222;font-weight:normal;font-style:normal;font-family:'Liberation Sans',sans-serif;text-align:left;opacity:1">start creating a more p</div>
<div class="b" style="left:16.1px;top:44.5px;width:28.5px;height:6.0px;clip-path:inset(-1px 0 -1px 0);white-space:nowrap;text-shadow:0 0 .6px #2a6fc988;font-size:3.1px;line-height:6.0px;color:#2a6fc9;font-weight:normal;font-style:normal;font-family:'Liberation Sans',sans-serif;text-align:left;opacity:1">g document. Add content here. Th</div>
<div class="b" style="left:16.1px;top:48.8px;width:19.2px;height:6.0px;clip-path:inset(-1px 0 -1px 0);white-space:nowrap;text-shadow:0 0 .6px #22222288;font-size:3.1px;line-height:6.0px;color:#222222;font-weight:normal;font-style:normal;font-family:'Liberation Sans',sans-serif;text-align:left;opacity:1">mplate will guide you t</div>
<div class="b" style="left:16.1px;top:57.4px;width:37.0px;height:6.0px;clip-path:inset(-1px 0 -1px 0);white-space:nowrap;text-shadow:0 0 .6px #22222288;font-size:3.1px;line-height:6.0px;color:#222222;font-weight:normal;font-style:normal;font-family:'Liberation Sans',sans-serif;text-align:left;opacity:1">content for each section. Use as is, or</div>
<div class="b" style="left:16.1px;top:61.7px;width:28.2px;height:6.0px;clip-path:inset(-1px 0 -1px 0);white-space:nowrap;text-shadow:0 0 .6px #22222288;font-size:3.1px;line-height:6.0px;color:#222222;font-weight:normal;font-style:normal;font-family:'Liberation Sans',sans-serif;text-align:left;opacity:1">or easily customize with your o</div>
<div class="b" style="left:16.1px;top:66.2px;width:30.4px;height:6.0px;clip-path:inset(-1px 0 -1px 0);white-space:nowrap;text-shadow:0 0 .6px #22222288;font-size:3.1px;line-height:6.0px;color:#222222;font-weight:normal;font-style:normal;font-family:'Liberation Sans',sans-serif;text-align:left;opacity:1">ges, fonts, and colors. This mode</div>
<div class="b" style="left:16.1px;top:74.9px;width:14.5px;height:6.0px;clip-path:inset(-1px 0 -1px 0);white-space:nowrap;text-shadow:0 0 .6px #22222288;font-size:3.1px;line-height:6.0px;color:#222222;font-weight:normal;font-style:normal;font-family:'Liberation Sans',sans-serif;text-align:left;opacity:1">nd versatile format</div>
<div class="b" style="left:16.1px;top:82.4px;width:44.5px;height:6.0px;clip-path:inset(-1px 0 -1px 0);white-space:nowrap;text-shadow:0 0 .6px #11111188;font-size:3.1px;line-height:6.0px;color:#111111;font-weight:bold;font-style:normal;font-family:'Liberation Sans',sans-serif;text-align:left;opacity:1">r all the details you would like to include. S</div>
<div class="b" style="left:16.1px;top:90.8px;width:98.9px;height:6.0px;clip-path:inset(-1px 0 -1px 0);white-space:nowrap;text-shadow:0 0 .6px #22222288;font-size:3.1px;line-height:6.0px;color:#222222;font-weight:normal;font-style:normal;font-family:'Liberation Sans',sans-serif;text-align:left;opacity:1">nclude. Simply replace this content with your own to start creating a more polished looking docu</div>
<div class="b" style="left:16.1px;top:95.1px;width:78.2px;height:6.0px;clip-path:inset(-1px 0 -1px 0);white-space:nowrap;text-shadow:0 0 .6px #22222288;font-size:3.1px;line-height:6.0px;color:#222222;font-weight:normal;font-style:normal;font-family:'Liberation Sans',sans-serif;text-align:left;opacity:1">ith your own to start creating a more polished looking document. Add content</div>
<div class="b" style="left:16.1px;top:103.5px;width:91.3px;height:6.0px;clip-path:inset(-1px 0 -1px 0);white-space:nowrap;text-shadow:0 0 .6px #22222288;font-size:3.1px;line-height:6.0px;color:#222222;font-weight:normal;font-style:normal;font-family:'Liberation Sans',sans-serif;text-align:left;opacity:1">polished looking document. Add content here. This template will guide you through adding</div>
<div class="b" style="left:16.1px;top:107.9px;width:95.1px;height:6.0px;clip-path:inset(-1px 0 -1px 0);white-space:nowrap;text-shadow:0 0 .6px #22222288;font-size:3.1px;line-height:6.0px;color:#222222;font-weight:normal;font-style:normal;font-family:'Liberation Sans',sans-serif;text-align:left;opacity:1">nt here. This template will guide you through adding content for each section. Use as is, or</div>
<div class="b" style="left:16.1px;top:116.7px;width:97.9px;height:6.0px;clip-path:inset(-1px 0 -1px 0);white-space:nowrap;text-shadow:0 0 .6px #22222288;font-size:3.1px;line-height:6.0px;color:#222222;font-weight:normal;font-style:normal;font-family:'Liberation Sans',sans-serif;text-align:left;opacity:1">through adding content for each section. Use as is, or easily customize with your own images,</div>
<div class="b" style="left:16.1px;top:121.0px;width:93.2px;height:6.0px;clip-path:inset(-1px 0 -1px 0);white-space:nowrap;text-shadow:0 0 .6px #22222288;font-size:3.1px;line-height:6.0px;color:#222222;font-weight:normal;font-style:normal;font-family:'Liberation Sans',sans-serif;text-align:left;opacity:1">ion. Use as is, or easily customize with your own images, fonts, and colors. This modern an</div>
<div class="b" style="left:16.1px;top:125.1px;width:95.7px;height:6.0px;clip-path:inset(-1px 0 -1px 0);white-space:nowrap;text-shadow:0 0 .6px #22222288;font-size:3.1px;line-height:6.0px;color:#222222;font-weight:normal;font-style:normal;font-family:'Liberation Sans',sans-serif;text-align:left;opacity:1">ith your own images, fonts, and colors. This modern and versatile format includes space for a</div>
<div class="b" style="left:16.1px;top:129.4px;width:102.6px;height:6.0px;clip-path:inset(-1px 0 -1px 0);white-space:nowrap;text-shadow:0 0 .6px #22222288;font-size:3.1px;line-height:6.0px;color:#222222;font-weight:normal;font-style:normal;font-family:'Liberation Sans',sans-serif;text-align:left;opacity:1">s. This modern and versatile format includes space for all the details you would like to include. S</div>
<div class="b" style="left:16.1px;top:133.7px;width:89.5px;height:6.0px;clip-path:inset(-1px 0 -1px 0);white-space:nowrap;text-shadow:0 0 .6px #22222288;font-size:3.1px;line-height:6.0px;color:#222222;font-weight:normal;font-style:normal;font-family:'Liberation Sans',sans-serif;text-align:left;opacity:1">ncludes space for all the details you would like to include. Simply replace this conten</div>
<div class="b" style="left:16.1px;top:138.0px;width:13.5px;height:6.0px;clip-path:inset(-1px 0 -1px 0);white-space:nowrap;text-shadow:0 0 .6px #22222288;font-size:3.1px;line-height:6.0px;color:#222222;font-weight:normal;font-style:normal;font-family:'Liberation Sans',sans-serif;text-align:left;opacity:1">would like to inc</div>
<div class="b" style="left:16.1px;top:146.9px;width:94.5px;height:6.0px;clip-path:inset(-1px 0 -1px 0);white-space:nowrap;text-shadow:0 0 .6px #22222288;font-size:3.1px;line-height:6.0px;color:#222222;font-weight:normal;font-style:normal;font-family:'Liberation Sans',sans-serif;text-align:left;opacity:1">e this content with your own to start creating a more polished looking document. Add content</div>
<div class="b" style="left:16.1px;top:151.2px;width:18.8px;height:6.0px;clip-path:inset(-1px 0 -1px 0);white-space:nowrap;text-shadow:0 0 .6px #22222288;font-size:3.1px;line-height:6.0px;color:#222222;font-weight:normal;font-style:normal;font-family:'Liberation Sans',sans-serif;text-align:left;opacity:1">creating a more polish</div>
<div class="b" style="left:16.1px;top:163.2px;width:27.6px;height:6.0px;clip-path:inset(-1px 0 -1px 0);white-space:nowrap;text-shadow:0 0 .6px #22222288;font-size:3.1px;line-height:6.0px;color:#222222;font-weight:normal;font-style:normal;font-family:'Liberation Sans',sans-serif;text-align:left;opacity:1">ument. Add content here. This t</div>
<div class="b" style="left:16.1px;top:170.1px;width:18.8px;height:6.0px;clip-path:inset(-1px 0 -1px 0);white-space:nowrap;text-shadow:0 0 .6px #22222288;font-size:3.1px;line-height:6.0px;color:#222222;font-weight:normal;font-style:normal;font-family:'Liberation Sans',sans-serif;text-align:left;opacity:1">e will guide you throug</div>
</div>
<div class="b" style="left:160px;top:620px;width:135.600px;height:200px;overflow:hidden;border-radius:4px;background:#fff;">
<div class="b" style="left:15.9px;top:21.2px;width:13.9px;height:155.2px;background:#7fc1cf;border-radius:0px;"></div>
<div class="b" style="left:36.8px;top:21.4px;text-shadow:0 0 .3px #3d9bb088;white-space:nowrap;font-size:9.6px;line-height:11.5px;color:#3d9bb0;font-weight:bold;font-style:normal;font-family:'Liberation Sans',sans-serif;transform:scaleX(0.822);transform-origin:0 0;">Add name here</div>
<div class="b" style="left:36.8px;top:36.0px;width:21.0px;height:6.0px;clip-path:inset(-1px 0 -1px 0);white-space:nowrap;text-shadow:0 0 .6px #22222288;font-size:3.1px;line-height:6.0px;color:#222222;font-weight:normal;font-style:normal;font-family:'Liberation Sans',sans-serif;text-align:left;opacity:1">nt for each section. Use</div>
<div class="b" style="left:36.8px;top:40.4px;width:29.8px;height:6.0px;clip-path:inset(-1px 0 -1px 0);white-space:nowrap;text-shadow:0 0 .6px #2a6fc988;font-size:3.1px;line-height:6.0px;color:#2a6fc9;font-weight:normal;font-style:normal;font-family:'Liberation Sans',sans-serif;text-align:left;opacity:1">sily customize with your own imag</div>
<div class="b" style="left:36.8px;top:44.7px;width:20.0px;height:6.0px;clip-path:inset(-1px 0 -1px 0);white-space:nowrap;text-shadow:0 0 .6px #22222288;font-size:3.1px;line-height:6.0px;color:#222222;font-weight:normal;font-style:normal;font-family:'Liberation Sans',sans-serif;text-align:left;opacity:1">fonts, and colors. This</div>
<div class="b" style="left:36.8px;top:54.0px;width:38.8px;height:6.0px;clip-path:inset(-1px 0 -1px 0);white-space:nowrap;text-shadow:0 0 .6px #22222288;font-size:3.1px;line-height:6.0px;color:#222222;font-weight:normal;font-style:normal;font-family:'Liberation Sans',sans-serif;text-align:left;opacity:1">rsatile format includes space for all the</div>
<div class="b" style="left:36.8px;top:58.5px;width:29.4px;height:6.0px;clip-path:inset(-1px 0 -1px 0);white-space:nowrap;text-shadow:0 0 .6px #22222288;font-size:3.1px;line-height:6.0px;color:#222222;font-weight:normal;font-style:normal;font-family:'Liberation Sans',sans-serif;text-align:left;opacity:1">the details you would like to i</div>
<div class="b" style="left:36.8px;top:63.0px;width:32.2px;height:6.0px;clip-path:inset(-1px 0 -1px 0);white-space:nowrap;text-shadow:0 0 .6px #22222288;font-size:3.1px;line-height:6.0px;color:#222222;font-weight:normal;font-style:normal;font-family:'Liberation Sans',sans-serif;text-align:left;opacity:1">e. Simply replace this content with</div>
<div class="b" style="left:36.8px;top:71.9px;width:15.3px;height:6.0px;clip-path:inset(-1px 0 -1px 0);white-space:nowrap;text-shadow:0 0 .6px #22222288;font-size:3.1px;line-height:6.0px;color:#222222;font-weight:normal;font-style:normal;font-family:'Liberation Sans',sans-serif;text-align:left;opacity:1">our own to start cre</div>
<div class="b" style="left:36.8px;top:81.0px;width:49.1px;height:6.0px;clip-path:inset(-1px 0 -1px 0);white-space:nowrap;text-shadow:0 0 .6px #11111188;font-size:3.1px;line-height:6.0px;color:#111111;font-weight:bold;font-style:normal;font-family:'Liberation Sans',sans-serif;text-align:left;opacity:1">shed looking document. Add content here. This temp</div>
<div class="b" style="left:36.8px;top:90.2px;width:73.8px;height:6.0px;clip-path:inset(-1px 0 -1px 0);white-space:nowrap;text-shadow:0 0 .6px #22222288;font-size:3.1px;line-height:6.0px;color:#222222;font-weight:normal;font-style:normal;font-family:'Liberation Sans',sans-serif;text-align:left;opacity:1">re. This template will guide you through adding content for each section.</div>
<div class="b" style="left:36.8px;top:94.7px;width:81.3px;height:6.0px;clip-path:inset(-1px 0 -1px 0);white-space:nowrap;text-shadow:0 0 .6px #22222288;font-size:3.1px;line-height:6.0px;color:#222222;font-weight:normal;font-style:normal;font-family:'Liberation Sans',sans-serif;text-align:left;opacity:1">ugh adding content for each section. Use as is, or easily customize with your ow</div>
<div class="b" style="left:36.8px;top:99.2px;width:29.4px;height:6.0px;clip-path:inset(-1px 0 -1px 0);white-space:nowrap;text-shadow:0 0 .6px #22222288;font-size:3.1px;line-height:6.0px;color:#222222;font-weight:normal;font-style:normal;font-family:'Liberation Sans',sans-serif;text-align:left;opacity:1">Use as is, or easily customize w</div>
<div class="b" style="left:36.8px;top:108.0px;width:78.7px;height:6.0px;clip-path:inset(-1px 0 -1px 0);white-space:nowrap;text-shadow:0 0 .6px #22222288;font-size:3.1px;line-height:6.0px;color:#222222;font-weight:normal;font-style:normal;font-family:'Liberation Sans',sans-serif;text-align:left;opacity:1">our own images, fonts, and colors. This modern and versatile format includes s</div>
<div class="b" style="left:36.8px;top:112.7px;width:77.6px;height:6.0px;clip-path:inset(-1px 0 -1px 0);white-space:nowrap;text-shadow:0 0 .6px #22222288;font-size:3.1px;line-height:6.0px;color:#222222;font-weight:normal;font-style:normal;font-family:'Liberation Sans',sans-serif;text-align:left;opacity:1">is modern and versatile format includes space for all the details you would l</div>
<div class="b" style="left:36.8px;top:117.2px;width:80.0px;height:6.0px;clip-path:inset(-1px 0 -1px 0);white-space:nowrap;text-shadow:0 0 .6px #22222288;font-size:3.1px;line-height:6.0px;color:#222222;font-weight:normal;font-style:normal;font-family:'Liberation Sans',sans-serif;text-align:left;opacity:1">es space for all the details you would like to include. Simply replace this con</div>
<div class="b" style="left:36.8px;top:121.9px;width:73.8px;height:6.0px;clip-path:inset(-1px 0 -1px 0);white-space:nowrap;text-shadow:0 0 .6px #22222288;font-size:3.1px;line-height:6.0px;color:#222222;font-weight:normal;font-style:normal;font-family:'Liberation Sans',sans-serif;text-align:left;opacity:1">d like to include. Simply replace this content with your own to start cre</div>
<div class="b" style="left:36.8px;top:126.4px;width:69.3px;height:6.0px;clip-path:inset(-1px 0 -1px 0);white-space:nowrap;text-shadow:0 0 .6px #22222288;font-size:3.1px;line-height:6.0px;color:#222222;font-weight:normal;font-style:normal;font-family:'Liberation Sans',sans-serif;text-align:left;opacity:1">s content with your own to start creating a more polished looking doc</div>
<div class="b" style="left:36.8px;top:130.9px;width:77.6px;height:6.0px;clip-path:inset(-1px 0 -1px 0);white-space:nowrap;text-shadow:0 0 .6px #22222288;font-size:3.1px;line-height:6.0px;color:#222222;font-weight:normal;font-style:normal;font-family:'Liberation Sans',sans-serif;text-align:left;opacity:1">ting a more polished looking document. Add content here. This template will g</div>
<div class="b" style="left:36.8px;top:135.4px;width:79.1px;height:6.0px;clip-path:inset(-1px 0 -1px 0);white-space:nowrap;text-shadow:0 0 .6px #22222288;font-size:3.1px;line-height:6.0px;color:#222222;font-weight:normal;font-style:normal;font-family:'Liberation Sans',sans-serif;text-align:left;opacity:1">. Add content here. This template will guide you through adding content for ea</div>
<div class="b" style="left:36.8px;top:139.9px;width:68.8px;height:6.0px;clip-path:inset(-1px 0 -1px 0);white-space:nowrap;text-shadow:0 0 .6px #22222288;font-size:3.1px;line-height:6.0px;color:#222222;font-weight:normal;font-style:normal;font-family:'Liberation Sans',sans-serif;text-align:left;opacity:1">l guide you through adding content for each section. Use as is, or ea</div>
<div class="b" style="left:36.8px;top:148.9px;width:69.3px;height:6.0px;clip-path:inset(-1px 0 -1px 0);white-space:nowrap;text-shadow:0 0 .6px #22222288;font-size:3.1px;line-height:6.0px;color:#222222;font-weight:normal;font-style:normal;font-family:'Liberation Sans',sans-serif;text-align:left;opacity:1">r each section. Use as is, or easily customize with your own images,</div>
<div class="b" style="left:36.8px;top:153.6px;width:77.6px;height:6.0px;clip-path:inset(-1px 0 -1px 0);white-space:nowrap;text-shadow:0 0 .6px #22222288;font-size:3.1px;line-height:6.0px;color:#222222;font-weight:normal;font-style:normal;font-family:'Liberation Sans',sans-serif;text-align:left;opacity:1">customize with your own images, fonts, and colors. This modern and versatile</div>
<div class="b" style="left:36.8px;top:157.9px;width:60.7px;height:6.0px;clip-path:inset(-1px 0 -1px 0);white-space:nowrap;text-shadow:0 0 .6px #22222288;font-size:3.1px;line-height:6.0px;color:#222222;font-weight:normal;font-style:normal;font-family:'Liberation Sans',sans-serif;text-align:left;opacity:1">, and colors. This modern and versatile format includes space</div>
<div class="b" style="left:36.8px;top:166.9px;width:28.1px;height:6.0px;clip-path:inset(-1px 0 -1px 0);white-space:nowrap;text-shadow:0 0 .6px #22222288;font-size:3.1px;line-height:6.0px;color:#222222;font-weight:normal;font-style:normal;font-family:'Liberation Sans',sans-serif;text-align:left;opacity:1">le format includes space for al</div>
<div class="b" style="left:36.8px;top:171.4px;width:19.5px;height:6.0px;clip-path:inset(-1px 0 -1px 0);white-space:nowrap;text-shadow:0 0 .6px #22222288;font-size:3.1px;line-height:6.0px;color:#222222;font-weight:normal;font-style:normal;font-family:'Liberation Sans',sans-serif;text-align:left;opacity:1">details you would like</div>
</div>
<div class="b" style="left:299.4000000000001px;top:201px;width:24.200px;height:24.200px;border-radius:12.100px;background:rgba(106,106,106,.92);"></div>
<svg class="b" style="left:307.29999999999995px;top:206.7px;" width="9" height="14" viewBox="0 0 9 14" fill="none"><path d="M1.600 1.900L7 7 1.600 12.100" stroke="#fff" stroke-width="2.100" stroke-linecap="round" stroke-linejoin="round"/></svg>
<div class="b" style="left:299.4000000000001px;top:453px;width:24.200px;height:24.200px;border-radius:12.100px;background:rgba(106,106,106,.92);"></div>
<svg class="b" style="left:307.29999999999995px;top:458.70000000000005px;" width="9" height="14" viewBox="0 0 9 14" fill="none"><path d="M1.600 1.900L7 7 1.600 12.100" stroke="#fff" stroke-width="2.100" stroke-linecap="round" stroke-linejoin="round"/></svg>
<div class="b" style="left:299.4000000000001px;top:705px;width:24.200px;height:24.200px;border-radius:12.100px;background:rgba(106,106,106,.92);"></div>
<svg class="b" style="left:307.29999999999995px;top:710.7px;" width="9" height="14" viewBox="0 0 9 14" fill="none"><path d="M1.600 1.900L7 7 1.600 12.100" stroke="#fff" stroke-width="2.100" stroke-linecap="round" stroke-linejoin="round"/></svg>
</div>
<div class="b" style="left:0px;top:992px;width:1536px;height:21px;background:#141414;border-radius:0px;"></div>
<div class="t" style="left:27.0px;top:998.0px;font-size:13px;color:#d2d2d2;font-weight:normal;font-style:normal;letter-spacing:-0.45px;font-family:'Liberation Sans',sans-serif;">Page 1 of 1</div>
<div class="t" style="left:123.5px;top:998.0px;font-size:13px;color:#d2d2d2;font-weight:normal;font-style:normal;letter-spacing:-0.29px;font-family:'Liberation Sans',sans-serif;">0 words</div>
<div class="t" style="left:202.0px;top:998.0px;font-size:13px;color:#d2d2d2;font-weight:normal;font-style:normal;letter-spacing:-0.69px;font-family:'Liberation Sans',sans-serif;">English (U.S.)</div>
<div class="t" style="left:307.0px;top:998.0px;font-size:13px;color:#d2d2d2;font-weight:normal;font-style:normal;letter-spacing:-0.36px;font-family:'Liberation Sans',sans-serif;">Editor Suggestions: Showing</div>
<div class="b" style="left:936px;top:1003.5px;width:12px;height:1.3px;background:#d2d2d2;border-radius:0px;"></div>
<div class="b" style="left:972px;top:1003.3px;width:150px;height:1.5px;background:#8a8a8a;border-radius:0px;"></div>
<div class="b" style="left:972px;top:1003px;width:34px;height:2px;background:#2f6fd6;border-radius:0px;"></div>
<div class="b" style="left:1000px;top:997.5px;width:13px;height:13px;background:#2b6cd4;border-radius:6.5px;border:1.500px solid #5a9cf0;"></div>
<div class="b" style="left:1143.5px;top:1003.5px;width:13px;height:1.3px;background:#d2d2d2;border-radius:0px;"></div>
<div class="b" style="left:1149.4px;top:997.5px;width:1.3px;height:13px;background:#d2d2d2;border-radius:0px;"></div>
<div class="t" style="left:1189.5px;top:997.5px;font-size:13px;color:#d2d2d2;font-weight:normal;font-style:normal;letter-spacing:-0.81px;font-family:'Liberation Sans',sans-serif;">100%</div>
<svg class="b" style="left:1250px;top:997px;" width="14" height="13" viewBox="0 0 14 13" fill="none"><path d="M1.500 8V2.800a1.300 1.300 0 0 1 1.300-1.300h8.400a1.300 1.300 0 0 1 1.300 1.300V8" stroke="#d2d2d2" stroke-width="1.200" stroke-linecap="round"/><path d="M3.500 8.500L1.500 10.500l2 2 M1.500 10.500H5.500 M10.500 8.500l2 2-2 2 M12.500 10.500H8.500" stroke="#d2d2d2" stroke-width="1.100" stroke-linecap="round" stroke-linejoin="round"/></svg>
<div class="t" style="left:1269.5px;top:997.5px;font-size:13px;color:#d2d2d2;font-weight:normal;font-style:normal;letter-spacing:-0.65px;font-family:'Liberation Sans',sans-serif;">Fit</div>
<svg class="b" style="left:1312px;top:996px;" width="16" height="16" viewBox="0 0 16 16" fill="none"><circle cx="8" cy="8" r="3.200" stroke="#d2d2d2" stroke-width="1.200"/><path d="M13.30 8.00L15.30 8.00" stroke="#d2d2d2" stroke-width="1.200" stroke-linecap="round"/><path d="M11.75 11.75L13.16 13.16" stroke="#d2d2d2" stroke-width="1.200" stroke-linecap="round"/><path d="M8.00 13.30L8.00 15.30" stroke="#d2d2d2" stroke-width="1.200" stroke-linecap="round"/><path d="M4.25 11.75L2.84 13.16" stroke="#d2d2d2" stroke-width="1.200" stroke-linecap="round"/><path d="M2.70 8.00L0.70 8.00" stroke="#d2d2d2" stroke-width="1.200" stroke-linecap="round"/><path d="M4.25 4.25L2.84 2.84" stroke="#d2d2d2" stroke-width="1.200" stroke-linecap="round"/><path d="M8.00 2.70L8.00 0.70" stroke="#d2d2d2" stroke-width="1.200" stroke-linecap="round"/><path d="M11.75 4.25L13.16 2.84" stroke="#d2d2d2" stroke-width="1.200" stroke-linecap="round"/></svg>
<div class="t" style="left:1358.5px;top:997.5px;font-size:13px;color:#d2d2d2;font-weight:normal;font-style:normal;letter-spacing:-0.32px;font-family:'Liberation Sans',sans-serif;">Give Feedback to Microsoft</div>
</body></html>
